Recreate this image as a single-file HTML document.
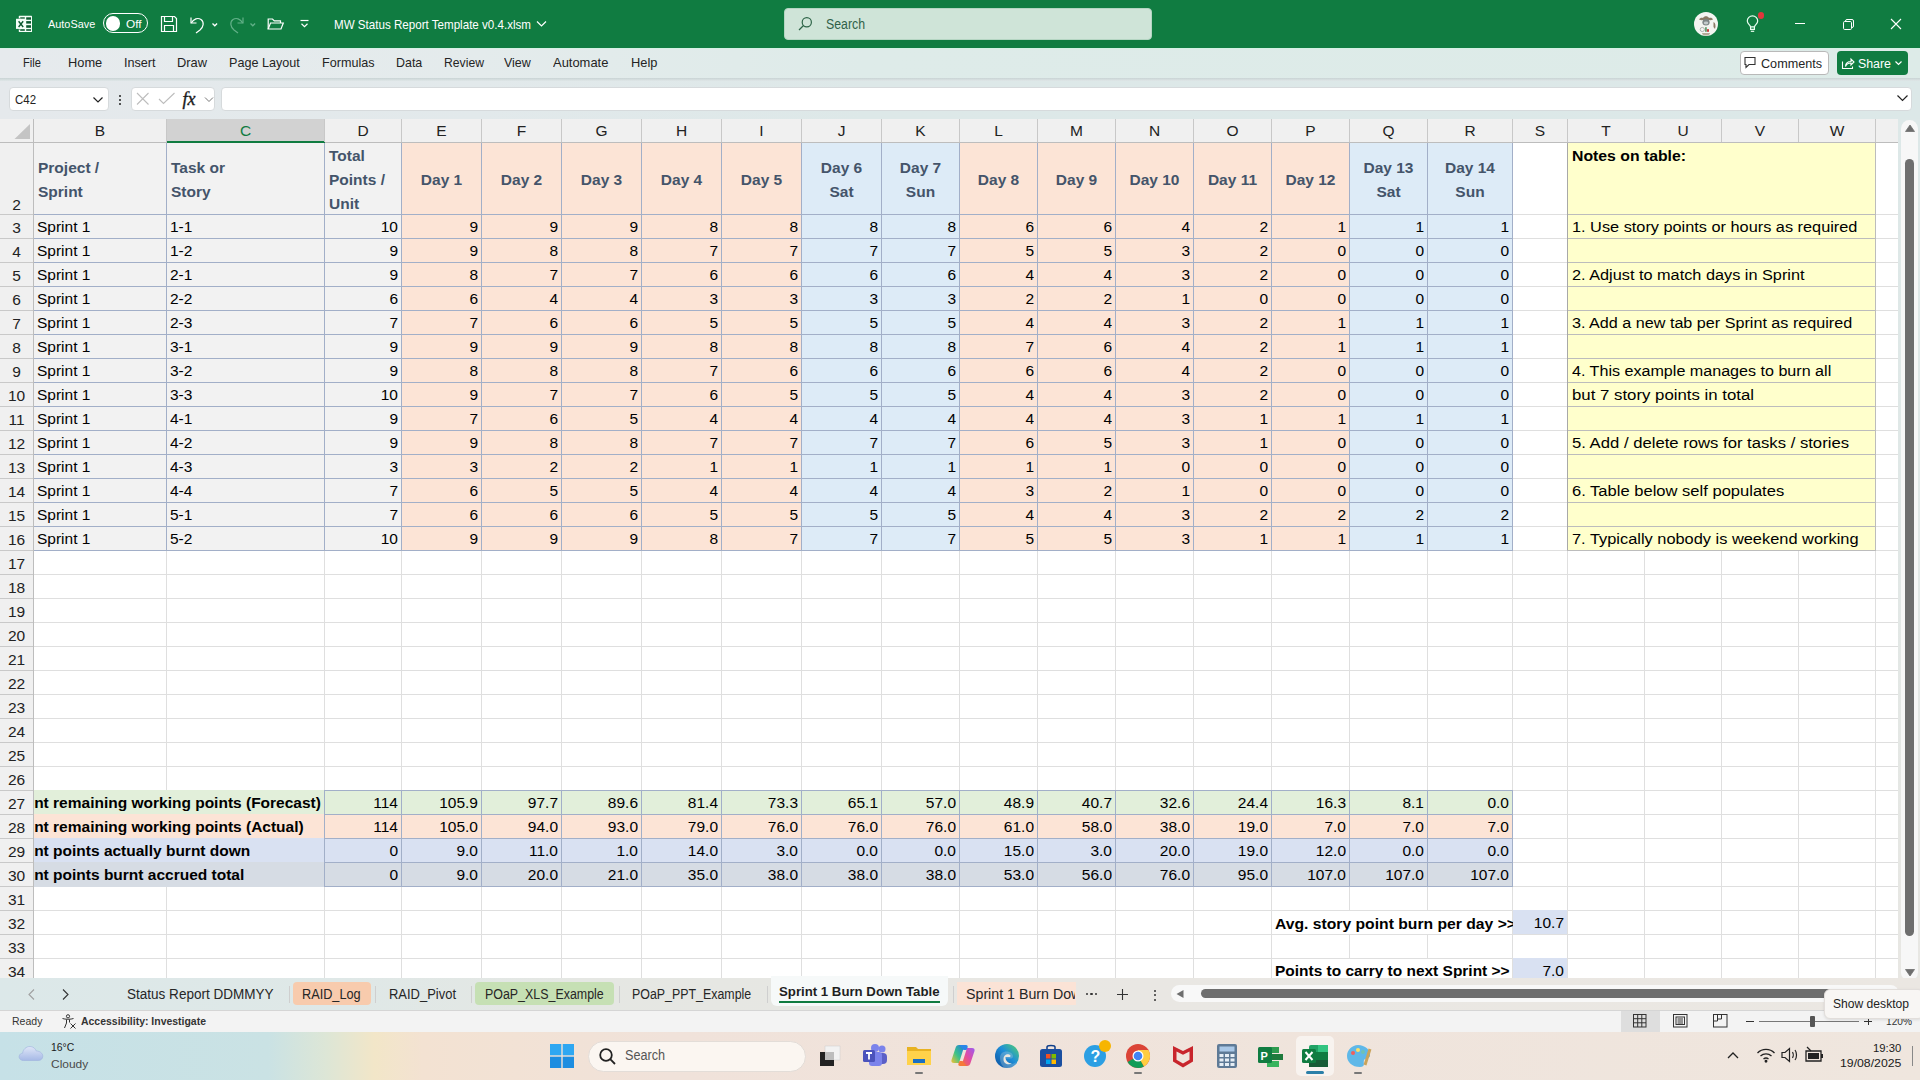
<!DOCTYPE html><html><head><meta charset="utf-8"><style>

*{box-sizing:border-box;margin:0;padding:0}
html,body{width:1920px;height:1080px;overflow:hidden;background:#fff;font-family:"Liberation Sans", sans-serif;}
.ab{position:absolute}
.t{position:absolute;white-space:nowrap;line-height:1}
.c{position:absolute;white-space:nowrap;font-size:15.5px;line-height:24px;color:#000;overflow:hidden}
.r{text-align:right}
.hd{font-weight:bold;color:#44546a;}

</style></head><body>
<div class="ab" style="left:0;top:0;width:1920px;height:48px;background:#107c41"></div>
<svg class="ab" style="left:15px;top:15px" width="18" height="18" viewBox="0 0 18 18">
<rect x="3.8" y="0.8" width="13.2" height="16.2" rx="0.6" fill="#f4fff8"/>
<g fill="#0c5a30"><rect x="11.2" y="2.3" width="4.8" height="2.4"/><rect x="11.2" y="6.1" width="4.8" height="2.5"/><rect x="11.2" y="10.2" width="4.8" height="2.6"/><rect x="11.2" y="14.2" width="4.8" height="1.6"/><rect x="5.2" y="2.3" width="4.6" height="1.5"/><rect x="5.2" y="14.2" width="4.6" height="1.6"/></g>
<rect x="3.8" y="3.2" width="1" height="0.7" fill="#0c5a30"/><rect x="3.8" y="13.9" width="1" height="0.7" fill="#0c5a30"/>
<rect x="1" y="3.8" width="9.3" height="10.1" fill="#f4fff8"/>
<path d="M3.6 6.3 L8.2 12 M8.2 6.3 L3.6 12" stroke="#0c5a30" stroke-width="1.4"/></svg>
<div class="t" style="left:48px;top:18.69px;font-size:11px;color:#fff;font-weight:400;font-family:'Liberation Sans';letter-spacing:0px;transform:scaleX(0.9895);transform-origin:0 0;">AutoSave</div>
<div class="ab" style="left:103px;top:13px;width:45px;height:20px;border:1.3px solid #fff;border-radius:10px"></div>
<div class="ab" style="left:105.5px;top:16px;width:14.5px;height:14.5px;background:#fff;border-radius:50%"></div>
<div class="t" style="left:126px;top:18.69px;font-size:11px;color:#fff;font-weight:400;font-family:'Liberation Sans';letter-spacing:0px;transform:scaleX(1.0770);transform-origin:0 0;">Off</div>
<svg class="ab" style="left:160px;top:15px" width="19" height="19" viewBox="0 0 19 19" fill="none" stroke="#fff" stroke-width="1.2">
<path d="M1.5 1.5 H14.5 L16.5 3.5 V16.5 H1.5 Z"/><path d="M4.5 1.5 V6.5 H12.5 V1.5"/><path d="M4.5 16.5 V10.5 H13.5 V16.5"/></svg>
<svg class="ab" style="left:189px;top:15px" width="32" height="19" viewBox="0 0 32 19" fill="none" stroke="#fff" stroke-width="1.2">
<path d="M2 2.5 V8 H7.5"/><path d="M2.3 8 C4.5 3.5 9 2.5 12 4.5 C15.5 7 14.5 12 11 15 L7 18"/><path d="M23.5 8.5 L25.8 10.8 L28.1 8.5" stroke-width="1.3"/></svg>
<svg class="ab" style="left:228px;top:15px" width="32" height="19" viewBox="0 0 32 19" fill="none" stroke="#62b088" stroke-width="1.2">
<path d="M15 2.5 V8 H9.5"/><path d="M14.7 8 C12.5 3.5 8 2.5 5 4.5 C1.5 7 2.5 12 6 15 L10 18"/><path d="M22.5 8.5 L24.8 10.8 L27.1 8.5" stroke-width="1.3"/></svg>
<svg class="ab" style="left:266px;top:15px" width="19" height="19" viewBox="0 0 19 19" fill="none" stroke="#fff" stroke-width="1.2">
<path d="M2.2 14 V4 H6.5 L8.3 5.8 H14.5 V8"/><path d="M2.2 14 L4.5 8 H17.3 L15 14 Z"/></svg>
<svg class="ab" style="left:297.5px;top:17px" width="13" height="13" viewBox="0 0 13 13" fill="none" stroke="#fff" stroke-width="1.2">
<line x1="2.5" y1="3.5" x2="10.5" y2="3.5"/><path d="M3.5 6.8 L6.5 9.6 L9.5 6.8"/></svg>
<div class="t" style="left:334.4px;top:18.96px;font-size:12.8px;color:#fff;font-weight:400;font-family:'Liberation Sans';letter-spacing:0px;transform:scaleX(0.9062);transform-origin:0 0;">MW Status Report Template v0.4.xlsm</div>
<svg class="ab" style="left:535px;top:19px" width="13" height="10" viewBox="0 0 13 10" fill="none" stroke="#fff" stroke-width="1.2"><path d="M2 2.5 L6.5 7 L11 2.5"/></svg>
<div class="ab" style="left:784px;top:8px;width:368px;height:32px;background:#cfe4d8;border:1px solid #b4d5c2;border-radius:4px"></div>
<svg class="ab" style="left:797px;top:16px" width="16" height="16" viewBox="0 0 16 16" fill="none" stroke="#2d6447" stroke-width="1.2"><circle cx="9.8" cy="6.2" r="4.6"/><line x1="6.5" y1="9.5" x2="2" y2="14"/></svg>
<div class="t" style="left:826px;top:17.45px;font-size:14px;color:#2f6149;font-weight:400;font-family:'Liberation Sans';letter-spacing:0px;transform:scaleX(0.8792);transform-origin:0 0;">Search</div>
<svg class="ab" style="left:1693px;top:11px" width="26" height="26" viewBox="0 0 26 26"><circle cx="13" cy="13" r="12" fill="#f3f5f1"/>
<path d="M6 8.5 C7 6.5 9 6.5 10 7 C11 4.5 15 4.5 16 7 C17 6.5 19.5 6.5 20 8.5 C18 9.5 16.5 9 16 9 H10 C9.5 9 8 9.5 6 8.5 Z" fill="#8a7a64"/>
<ellipse cx="13" cy="11.3" rx="3.6" ry="3.3" fill="#7d8586"/><ellipse cx="13" cy="12" rx="2.3" ry="1.4" fill="#c4cccd"/>
<path d="M20.5 11 C22.5 12 23 15 22 18 L20.5 16 Z" fill="#8a7a64"/><path d="M13 24.5 C10 24.5 9 23 9 22 H17 C17 23 16 24.5 13 24.5 Z" fill="#9a8a70" opacity="0.7"/>
<circle cx="9.3" cy="18.5" r="2.1" fill="none" stroke="#a0a0a0" stroke-width="0.8"/><rect x="12.3" y="16.2" width="1.3" height="4.6" fill="#2d7a3e"/><rect x="14" y="18.2" width="2" height="2.6" fill="#d03a3a"/></svg>
<svg class="ab" style="left:1745px;top:14px" width="16" height="20" viewBox="0 0 16 20" fill="none" stroke="#eafff2" stroke-width="1.2">
<path d="M5.5 12.8 C5.2 11 2.3 9.8 2.3 7 A5.2 5.2 0 0 1 12.7 7 C12.7 9.8 9.8 11 9.5 12.8 Z"/><path d="M5.6 13 V15.3 H9.4 V13"/><line x1="5.8" y1="17.3" x2="9.2" y2="17.3"/></svg>
<div class="ab" style="left:1757.6px;top:12.1px;width:6.9px;height:6.9px;background:#e0363c;border-radius:50%"></div>
<div class="ab" style="left:1795px;top:23px;width:10px;height:1px;background:#fff"></div>
<svg class="ab" style="left:1842px;top:18px" width="13" height="13" viewBox="0 0 13 13" fill="none" stroke="#fff" stroke-width="1"><rect x="1.5" y="3.5" width="8" height="8" rx="1.2"/><path d="M3.5 3.5 V3 A1.5 1.5 0 0 1 5 1.5 H10 A1.5 1.5 0 0 1 11.5 3 V8 A1.5 1.5 0 0 1 10 9.5 H9.5"/></svg>
<svg class="ab" style="left:1890px;top:18px" width="12" height="12" viewBox="0 0 12 12" fill="none" stroke="#fff" stroke-width="1.1"><path d="M1 1 L11 11 M11 1 L1 11"/></svg>
<div class="ab" style="left:0;top:48px;width:1920px;height:31px;background:linear-gradient(90deg,#e6eaed 0%,#e4ebec 25%,#deebe9 45%,#ddebe8 100%)"></div>
<div class="ab" style="left:0;top:48px;width:1920px;height:1px;background:#d2f3e2;opacity:0.7"></div>
<div class="ab" style="left:0;top:78px;width:1920px;height:3px;background:linear-gradient(#c9d3d4,#dfe7e8)"></div>
<div class="t" style="left:22.5px;top:57.93px;font-size:11.9px;color:#242424;font-weight:400;font-family:'Liberation Sans';letter-spacing:0px;transform:scaleX(0.9389);transform-origin:0 0;">File</div>
<div class="t" style="left:68.3px;top:57.93px;font-size:11.9px;color:#242424;font-weight:400;font-family:'Liberation Sans';letter-spacing:0px;transform:scaleX(1.0782);transform-origin:0 0;">Home</div>
<div class="t" style="left:124.2px;top:57.93px;font-size:11.9px;color:#242424;font-weight:400;font-family:'Liberation Sans';letter-spacing:0px;transform:scaleX(1.0622);transform-origin:0 0;">Insert</div>
<div class="t" style="left:177.2px;top:57.93px;font-size:11.9px;color:#242424;font-weight:400;font-family:'Liberation Sans';letter-spacing:0px;transform:scaleX(1.0811);transform-origin:0 0;">Draw</div>
<div class="t" style="left:229.2px;top:57.93px;font-size:11.9px;color:#242424;font-weight:400;font-family:'Liberation Sans';letter-spacing:0px;transform:scaleX(1.0602);transform-origin:0 0;">Page Layout</div>
<div class="t" style="left:322.2px;top:57.93px;font-size:11.9px;color:#242424;font-weight:400;font-family:'Liberation Sans';letter-spacing:0px;transform:scaleX(1.0593);transform-origin:0 0;">Formulas</div>
<div class="t" style="left:396.3px;top:57.93px;font-size:11.9px;color:#242424;font-weight:400;font-family:'Liberation Sans';letter-spacing:0px;transform:scaleX(1.0468);transform-origin:0 0;">Data</div>
<div class="t" style="left:444.1px;top:57.93px;font-size:11.9px;color:#242424;font-weight:400;font-family:'Liberation Sans';letter-spacing:0px;transform:scaleX(1.0256);transform-origin:0 0;">Review</div>
<div class="t" style="left:504.2px;top:57.93px;font-size:11.9px;color:#242424;font-weight:400;font-family:'Liberation Sans';letter-spacing:0px;transform:scaleX(1.0484);transform-origin:0 0;">View</div>
<div class="t" style="left:553.3px;top:57.93px;font-size:11.9px;color:#242424;font-weight:400;font-family:'Liberation Sans';letter-spacing:0px;transform:scaleX(1.0883);transform-origin:0 0;">Automate</div>
<div class="t" style="left:631.2px;top:57.93px;font-size:11.9px;color:#242424;font-weight:400;font-family:'Liberation Sans';letter-spacing:0px;transform:scaleX(1.0789);transform-origin:0 0;">Help</div>
<div class="ab" style="left:1739.5px;top:51px;width:89px;height:24px;background:#fff;border:1px solid #b9b9b9;border-radius:4px"></div>
<svg class="ab" style="left:1743px;top:56px" width="14" height="14" viewBox="0 0 14 14" fill="none" stroke="#333" stroke-width="1.1"><path d="M2 1.5 H12 V8.5 H6 L3 11.5 V8.5 H2 Z"/></svg>
<div class="t" style="left:1760.6px;top:58.14px;font-size:12px;color:#242424;font-weight:400;font-family:'Liberation Sans';letter-spacing:0px;transform:scaleX(1.0514);transform-origin:0 0;">Comments</div>
<div class="ab" style="left:1837px;top:51px;width:71px;height:24px;background:#107c41;border-radius:4px"></div>
<svg class="ab" style="left:1841px;top:56px" width="14" height="14" viewBox="0 0 14 14" fill="none" stroke="#fff" stroke-width="1.1"><path d="M1.5 5.5 V12.5 H11.5 V10.5"/><path d="M4.5 10.5 C4.5 7 7 5.5 10 5.5 V3 L13 6 L10 9 V7 C7.5 7 5.5 8 4.5 10.5 Z"/></svg>
<div class="t" style="left:1858px;top:58.14px;font-size:12px;color:#fff;font-weight:400;font-family:'Liberation Sans';letter-spacing:0px;transform:scaleX(1.0302);transform-origin:0 0;">Share</div>
<svg class="ab" style="left:1894px;top:59px" width="9" height="8" viewBox="0 0 9 8" fill="none" stroke="#fff" stroke-width="1.2"><path d="M1.5 2.5 L4.5 5.5 L7.5 2.5"/></svg>
<div class="ab" style="left:0;top:81px;width:1920px;height:38px;background:linear-gradient(90deg,#e5e9ec 0%,#e2e9eb 25%,#dde8e8 45%,#dce8e8 100%)"></div>
<div class="ab" style="left:8.5px;top:86.8px;width:100.5px;height:24.5px;background:#fff;border:1px solid #d6dadc;border-radius:4px"></div>
<div class="t" style="left:15.2px;top:92.90px;font-size:13px;color:#222;font-weight:400;font-family:'Liberation Sans';letter-spacing:0px;transform:scaleX(0.8802);transform-origin:0 0;">C42</div>
<svg class="ab" style="left:92px;top:96px" width="12" height="8" viewBox="0 0 12 8" fill="none" stroke="#222" stroke-width="1.2"><path d="M1.5 1.5 L6 6 L10.5 1.5"/></svg>
<div class="ab" style="left:118.8px;top:94.5px;width:2px;height:2px;background:#222;border-radius:50%"></div>
<div class="ab" style="left:118.8px;top:98.5px;width:2px;height:2px;background:#222;border-radius:50%"></div>
<div class="ab" style="left:118.8px;top:102.5px;width:2px;height:2px;background:#222;border-radius:50%"></div>
<div class="ab" style="left:131px;top:86.8px;width:84px;height:24.5px;background:#fff;border:1px solid #d6dadc;border-radius:4px"></div>
<svg class="ab" style="left:136px;top:92px" width="42" height="14" viewBox="0 0 42 14" fill="none" stroke="#bdbdbd" stroke-width="1.1"><path d="M1 1 L12.5 12.5 M12.5 1 L1 12.5"/><path d="M23 7 L27.5 11.5 L38.5 1"/></svg>
<div class="t" style="left:182.5px;top:89.5px;font-size:18px;font-style:italic;font-weight:normal;font-family:'Liberation Serif',serif;color:#1a1a1a;-webkit-text-stroke:0.35px #1a1a1a">fx</div>
<svg class="ab" style="left:204px;top:96px" width="10" height="7" viewBox="0 0 10 7" fill="none" stroke="#777" stroke-width="1"><path d="M1 1.5 L5 5.5 L9 1.5"/></svg>
<div class="ab" style="left:221px;top:86.8px;width:1690.5px;height:24.5px;background:#fff;border:1px solid #d6dadc;border-radius:4px"></div>
<svg class="ab" style="left:1896px;top:94px" width="13" height="9" viewBox="0 0 13 9" fill="none" stroke="#222" stroke-width="1.2"><path d="M1.5 1.5 L6.5 6.5 L11.5 1.5"/></svg>
<div class="ab" style="left:0;top:119px;width:1898px;height:859px;background:#fff;overflow:hidden">
<div class="ab" style="left:0px;top:0px;width:1900px;height:23px;background:#f0f0f0"></div>
<div class="ab" style="left:0px;top:23px;width:1900px;height:1px;background:#bdbdbd"></div>
<div class="ab" style="left:0px;top:24px;width:33px;height:835px;background:#f0f0f0"></div>
<div class="ab" style="left:33px;top:0px;width:1px;height:859px;background:#bdbdbd"></div>
<svg class="ab" style="left:10px;top:4px" width="21" height="17" viewBox="0 0 21 17"><path d="M20 1 V16 H4.5 Z" fill="#c4c4c4"/></svg>
<div class="ab" style="left:166px;top:0px;width:1px;height:23px;background:#c8c8c8"></div>
<div class="t" style="left:34px;top:4px;width:132px;text-align:center;font-size:15.5px;color:#222">B</div>
<div class="ab" style="left:167px;top:0px;width:157px;height:23px;background:#d2d2d2"></div>
<div class="ab" style="left:167px;top:22px;width:158px;height:2px;background:#107c41"></div>
<div class="ab" style="left:324px;top:0px;width:1px;height:23px;background:#c8c8c8"></div>
<div class="t" style="left:167px;top:4px;width:157px;text-align:center;font-size:15.5px;color:#107c41">C</div>
<div class="ab" style="left:401px;top:0px;width:1px;height:23px;background:#c8c8c8"></div>
<div class="t" style="left:325px;top:4px;width:76px;text-align:center;font-size:15.5px;color:#222">D</div>
<div class="ab" style="left:481px;top:0px;width:1px;height:23px;background:#c8c8c8"></div>
<div class="t" style="left:402px;top:4px;width:79px;text-align:center;font-size:15.5px;color:#222">E</div>
<div class="ab" style="left:561px;top:0px;width:1px;height:23px;background:#c8c8c8"></div>
<div class="t" style="left:482px;top:4px;width:79px;text-align:center;font-size:15.5px;color:#222">F</div>
<div class="ab" style="left:641px;top:0px;width:1px;height:23px;background:#c8c8c8"></div>
<div class="t" style="left:562px;top:4px;width:79px;text-align:center;font-size:15.5px;color:#222">G</div>
<div class="ab" style="left:721px;top:0px;width:1px;height:23px;background:#c8c8c8"></div>
<div class="t" style="left:642px;top:4px;width:79px;text-align:center;font-size:15.5px;color:#222">H</div>
<div class="ab" style="left:801px;top:0px;width:1px;height:23px;background:#c8c8c8"></div>
<div class="t" style="left:722px;top:4px;width:79px;text-align:center;font-size:15.5px;color:#222">I</div>
<div class="ab" style="left:881px;top:0px;width:1px;height:23px;background:#c8c8c8"></div>
<div class="t" style="left:802px;top:4px;width:79px;text-align:center;font-size:15.5px;color:#222">J</div>
<div class="ab" style="left:959px;top:0px;width:1px;height:23px;background:#c8c8c8"></div>
<div class="t" style="left:882px;top:4px;width:77px;text-align:center;font-size:15.5px;color:#222">K</div>
<div class="ab" style="left:1037px;top:0px;width:1px;height:23px;background:#c8c8c8"></div>
<div class="t" style="left:960px;top:4px;width:77px;text-align:center;font-size:15.5px;color:#222">L</div>
<div class="ab" style="left:1115px;top:0px;width:1px;height:23px;background:#c8c8c8"></div>
<div class="t" style="left:1038px;top:4px;width:77px;text-align:center;font-size:15.5px;color:#222">M</div>
<div class="ab" style="left:1193px;top:0px;width:1px;height:23px;background:#c8c8c8"></div>
<div class="t" style="left:1116px;top:4px;width:77px;text-align:center;font-size:15.5px;color:#222">N</div>
<div class="ab" style="left:1271px;top:0px;width:1px;height:23px;background:#c8c8c8"></div>
<div class="t" style="left:1194px;top:4px;width:77px;text-align:center;font-size:15.5px;color:#222">O</div>
<div class="ab" style="left:1349px;top:0px;width:1px;height:23px;background:#c8c8c8"></div>
<div class="t" style="left:1272px;top:4px;width:77px;text-align:center;font-size:15.5px;color:#222">P</div>
<div class="ab" style="left:1427px;top:0px;width:1px;height:23px;background:#c8c8c8"></div>
<div class="t" style="left:1350px;top:4px;width:77px;text-align:center;font-size:15.5px;color:#222">Q</div>
<div class="ab" style="left:1512px;top:0px;width:1px;height:23px;background:#c8c8c8"></div>
<div class="t" style="left:1428px;top:4px;width:84px;text-align:center;font-size:15.5px;color:#222">R</div>
<div class="ab" style="left:1567px;top:0px;width:1px;height:23px;background:#c8c8c8"></div>
<div class="t" style="left:1513px;top:4px;width:54px;text-align:center;font-size:15.5px;color:#222">S</div>
<div class="ab" style="left:1644px;top:0px;width:1px;height:23px;background:#c8c8c8"></div>
<div class="t" style="left:1568px;top:4px;width:76px;text-align:center;font-size:15.5px;color:#222">T</div>
<div class="ab" style="left:1721px;top:0px;width:1px;height:23px;background:#c8c8c8"></div>
<div class="t" style="left:1645px;top:4px;width:76px;text-align:center;font-size:15.5px;color:#222">U</div>
<div class="ab" style="left:1798px;top:0px;width:1px;height:23px;background:#c8c8c8"></div>
<div class="t" style="left:1722px;top:4px;width:76px;text-align:center;font-size:15.5px;color:#222">V</div>
<div class="ab" style="left:1875px;top:0px;width:1px;height:23px;background:#c8c8c8"></div>
<div class="t" style="left:1799px;top:4px;width:76px;text-align:center;font-size:15.5px;color:#222">W</div>
<div class="ab" style="left:1899px;top:0px;width:1px;height:23px;background:#c8c8c8"></div>
<div class="ab" style="left:34px;top:24px;width:132px;height:407px;background:#f2f2f2"></div>
<div class="ab" style="left:167px;top:24px;width:157px;height:407px;background:#f2f2f2"></div>
<div class="ab" style="left:325px;top:24px;width:76px;height:407px;background:#f2f2f2"></div>
<div class="ab" style="left:402px;top:24px;width:79px;height:407px;background:#fce4d6"></div>
<div class="ab" style="left:482px;top:24px;width:79px;height:407px;background:#fce4d6"></div>
<div class="ab" style="left:562px;top:24px;width:79px;height:407px;background:#fce4d6"></div>
<div class="ab" style="left:642px;top:24px;width:79px;height:407px;background:#fce4d6"></div>
<div class="ab" style="left:722px;top:24px;width:79px;height:407px;background:#fce4d6"></div>
<div class="ab" style="left:960px;top:24px;width:77px;height:407px;background:#fce4d6"></div>
<div class="ab" style="left:1038px;top:24px;width:77px;height:407px;background:#fce4d6"></div>
<div class="ab" style="left:1116px;top:24px;width:77px;height:407px;background:#fce4d6"></div>
<div class="ab" style="left:1194px;top:24px;width:77px;height:407px;background:#fce4d6"></div>
<div class="ab" style="left:1272px;top:24px;width:77px;height:407px;background:#fce4d6"></div>
<div class="ab" style="left:802px;top:24px;width:79px;height:407px;background:#ddebf7"></div>
<div class="ab" style="left:882px;top:24px;width:77px;height:407px;background:#ddebf7"></div>
<div class="ab" style="left:1350px;top:24px;width:77px;height:407px;background:#ddebf7"></div>
<div class="ab" style="left:1428px;top:24px;width:84px;height:407px;background:#ddebf7"></div>
<div class="ab" style="left:1568px;top:24px;width:307px;height:407px;background:#ffffcc"></div>
<div class="ab" style="left:166px;top:24px;width:1px;height:835px;background:#dfdfdf"></div>
<div class="ab" style="left:324px;top:24px;width:1px;height:835px;background:#dfdfdf"></div>
<div class="ab" style="left:401px;top:24px;width:1px;height:835px;background:#dfdfdf"></div>
<div class="ab" style="left:481px;top:24px;width:1px;height:835px;background:#dfdfdf"></div>
<div class="ab" style="left:561px;top:24px;width:1px;height:835px;background:#dfdfdf"></div>
<div class="ab" style="left:641px;top:24px;width:1px;height:835px;background:#dfdfdf"></div>
<div class="ab" style="left:721px;top:24px;width:1px;height:835px;background:#dfdfdf"></div>
<div class="ab" style="left:801px;top:24px;width:1px;height:835px;background:#dfdfdf"></div>
<div class="ab" style="left:881px;top:24px;width:1px;height:835px;background:#dfdfdf"></div>
<div class="ab" style="left:959px;top:24px;width:1px;height:835px;background:#dfdfdf"></div>
<div class="ab" style="left:1037px;top:24px;width:1px;height:835px;background:#dfdfdf"></div>
<div class="ab" style="left:1115px;top:24px;width:1px;height:835px;background:#dfdfdf"></div>
<div class="ab" style="left:1193px;top:24px;width:1px;height:835px;background:#dfdfdf"></div>
<div class="ab" style="left:1271px;top:24px;width:1px;height:835px;background:#dfdfdf"></div>
<div class="ab" style="left:1349px;top:24px;width:1px;height:835px;background:#dfdfdf"></div>
<div class="ab" style="left:1427px;top:24px;width:1px;height:835px;background:#dfdfdf"></div>
<div class="ab" style="left:1512px;top:24px;width:1px;height:835px;background:#dfdfdf"></div>
<div class="ab" style="left:1567px;top:24px;width:1px;height:835px;background:#dfdfdf"></div>
<div class="ab" style="left:1644px;top:24px;width:1px;height:835px;background:#dfdfdf"></div>
<div class="ab" style="left:1721px;top:24px;width:1px;height:835px;background:#dfdfdf"></div>
<div class="ab" style="left:1798px;top:24px;width:1px;height:835px;background:#dfdfdf"></div>
<div class="ab" style="left:1875px;top:24px;width:1px;height:835px;background:#dfdfdf"></div>
<div class="ab" style="left:1899px;top:24px;width:1px;height:835px;background:#dfdfdf"></div>
<div class="ab" style="left:34px;top:95px;width:1866px;height:1px;background:#dfdfdf"></div>
<div class="ab" style="left:34px;top:119px;width:1866px;height:1px;background:#dfdfdf"></div>
<div class="ab" style="left:34px;top:143px;width:1866px;height:1px;background:#dfdfdf"></div>
<div class="ab" style="left:34px;top:167px;width:1866px;height:1px;background:#dfdfdf"></div>
<div class="ab" style="left:34px;top:191px;width:1866px;height:1px;background:#dfdfdf"></div>
<div class="ab" style="left:34px;top:215px;width:1866px;height:1px;background:#dfdfdf"></div>
<div class="ab" style="left:34px;top:239px;width:1866px;height:1px;background:#dfdfdf"></div>
<div class="ab" style="left:34px;top:263px;width:1866px;height:1px;background:#dfdfdf"></div>
<div class="ab" style="left:34px;top:287px;width:1866px;height:1px;background:#dfdfdf"></div>
<div class="ab" style="left:34px;top:311px;width:1866px;height:1px;background:#dfdfdf"></div>
<div class="ab" style="left:34px;top:335px;width:1866px;height:1px;background:#dfdfdf"></div>
<div class="ab" style="left:34px;top:359px;width:1866px;height:1px;background:#dfdfdf"></div>
<div class="ab" style="left:34px;top:383px;width:1866px;height:1px;background:#dfdfdf"></div>
<div class="ab" style="left:34px;top:407px;width:1866px;height:1px;background:#dfdfdf"></div>
<div class="ab" style="left:34px;top:431px;width:1866px;height:1px;background:#dfdfdf"></div>
<div class="ab" style="left:34px;top:455px;width:1866px;height:1px;background:#dfdfdf"></div>
<div class="ab" style="left:34px;top:479px;width:1866px;height:1px;background:#dfdfdf"></div>
<div class="ab" style="left:34px;top:503px;width:1866px;height:1px;background:#dfdfdf"></div>
<div class="ab" style="left:34px;top:527px;width:1866px;height:1px;background:#dfdfdf"></div>
<div class="ab" style="left:34px;top:551px;width:1866px;height:1px;background:#dfdfdf"></div>
<div class="ab" style="left:34px;top:575px;width:1866px;height:1px;background:#dfdfdf"></div>
<div class="ab" style="left:34px;top:599px;width:1866px;height:1px;background:#dfdfdf"></div>
<div class="ab" style="left:34px;top:623px;width:1866px;height:1px;background:#dfdfdf"></div>
<div class="ab" style="left:34px;top:647px;width:1866px;height:1px;background:#dfdfdf"></div>
<div class="ab" style="left:34px;top:671px;width:1866px;height:1px;background:#dfdfdf"></div>
<div class="ab" style="left:34px;top:695px;width:1866px;height:1px;background:#dfdfdf"></div>
<div class="ab" style="left:34px;top:719px;width:1866px;height:1px;background:#dfdfdf"></div>
<div class="ab" style="left:34px;top:743px;width:1866px;height:1px;background:#dfdfdf"></div>
<div class="ab" style="left:34px;top:767px;width:1866px;height:1px;background:#dfdfdf"></div>
<div class="ab" style="left:34px;top:791px;width:1866px;height:1px;background:#dfdfdf"></div>
<div class="ab" style="left:34px;top:815px;width:1866px;height:1px;background:#dfdfdf"></div>
<div class="ab" style="left:34px;top:839px;width:1866px;height:1px;background:#dfdfdf"></div>
<div class="ab" style="left:34px;top:863px;width:1866px;height:1px;background:#dfdfdf"></div>
<div class="ab" style="left:34px;top:24px;width:132px;height:407px;background:#f2f2f2"></div>
<div class="ab" style="left:167px;top:24px;width:157px;height:407px;background:#f2f2f2"></div>
<div class="ab" style="left:325px;top:24px;width:76px;height:407px;background:#f2f2f2"></div>
<div class="ab" style="left:402px;top:24px;width:79px;height:407px;background:#fce4d6"></div>
<div class="ab" style="left:482px;top:24px;width:79px;height:407px;background:#fce4d6"></div>
<div class="ab" style="left:562px;top:24px;width:79px;height:407px;background:#fce4d6"></div>
<div class="ab" style="left:642px;top:24px;width:79px;height:407px;background:#fce4d6"></div>
<div class="ab" style="left:722px;top:24px;width:79px;height:407px;background:#fce4d6"></div>
<div class="ab" style="left:960px;top:24px;width:77px;height:407px;background:#fce4d6"></div>
<div class="ab" style="left:1038px;top:24px;width:77px;height:407px;background:#fce4d6"></div>
<div class="ab" style="left:1116px;top:24px;width:77px;height:407px;background:#fce4d6"></div>
<div class="ab" style="left:1194px;top:24px;width:77px;height:407px;background:#fce4d6"></div>
<div class="ab" style="left:1272px;top:24px;width:77px;height:407px;background:#fce4d6"></div>
<div class="ab" style="left:802px;top:24px;width:79px;height:407px;background:#ddebf7"></div>
<div class="ab" style="left:882px;top:24px;width:77px;height:407px;background:#ddebf7"></div>
<div class="ab" style="left:1350px;top:24px;width:77px;height:407px;background:#ddebf7"></div>
<div class="ab" style="left:1428px;top:24px;width:84px;height:407px;background:#ddebf7"></div>
<div class="ab" style="left:1568px;top:24px;width:307px;height:407px;background:#ffffcc"></div>
<div class="ab" style="left:1567px;top:95px;width:309px;height:1px;background:#bcbcbc"></div>
<div class="ab" style="left:1567px;top:119px;width:309px;height:1px;background:#bcbcbc"></div>
<div class="ab" style="left:1567px;top:143px;width:309px;height:1px;background:#bcbcbc"></div>
<div class="ab" style="left:1567px;top:167px;width:309px;height:1px;background:#bcbcbc"></div>
<div class="ab" style="left:1567px;top:191px;width:309px;height:1px;background:#bcbcbc"></div>
<div class="ab" style="left:1567px;top:215px;width:309px;height:1px;background:#bcbcbc"></div>
<div class="ab" style="left:1567px;top:239px;width:309px;height:1px;background:#bcbcbc"></div>
<div class="ab" style="left:1567px;top:263px;width:309px;height:1px;background:#bcbcbc"></div>
<div class="ab" style="left:1567px;top:287px;width:309px;height:1px;background:#bcbcbc"></div>
<div class="ab" style="left:1567px;top:311px;width:309px;height:1px;background:#bcbcbc"></div>
<div class="ab" style="left:1567px;top:335px;width:309px;height:1px;background:#bcbcbc"></div>
<div class="ab" style="left:1567px;top:359px;width:309px;height:1px;background:#bcbcbc"></div>
<div class="ab" style="left:1567px;top:383px;width:309px;height:1px;background:#bcbcbc"></div>
<div class="ab" style="left:1567px;top:407px;width:309px;height:1px;background:#bcbcbc"></div>
<div class="ab" style="left:1567px;top:431px;width:309px;height:1px;background:#bcbcbc"></div>
<div class="ab" style="left:1567px;top:24px;width:1px;height:407px;background:#a8a8a8"></div>
<div class="ab" style="left:1875px;top:24px;width:1px;height:407px;background:#bcbcbc"></div>
<div class="ab" style="left:166px;top:24px;width:1px;height:407px;background:#a2afc8"></div>
<div class="ab" style="left:324px;top:24px;width:1px;height:407px;background:#a2afc8"></div>
<div class="ab" style="left:401px;top:24px;width:1px;height:407px;background:#a2afc8"></div>
<div class="ab" style="left:481px;top:24px;width:1px;height:407px;background:#a2afc8"></div>
<div class="ab" style="left:561px;top:24px;width:1px;height:407px;background:#a2afc8"></div>
<div class="ab" style="left:641px;top:24px;width:1px;height:407px;background:#a2afc8"></div>
<div class="ab" style="left:721px;top:24px;width:1px;height:407px;background:#a2afc8"></div>
<div class="ab" style="left:801px;top:24px;width:1px;height:407px;background:#a2afc8"></div>
<div class="ab" style="left:881px;top:24px;width:1px;height:407px;background:#a2afc8"></div>
<div class="ab" style="left:959px;top:24px;width:1px;height:407px;background:#a2afc8"></div>
<div class="ab" style="left:1037px;top:24px;width:1px;height:407px;background:#a2afc8"></div>
<div class="ab" style="left:1115px;top:24px;width:1px;height:407px;background:#a2afc8"></div>
<div class="ab" style="left:1193px;top:24px;width:1px;height:407px;background:#a2afc8"></div>
<div class="ab" style="left:1271px;top:24px;width:1px;height:407px;background:#a2afc8"></div>
<div class="ab" style="left:1349px;top:24px;width:1px;height:407px;background:#a2afc8"></div>
<div class="ab" style="left:1427px;top:24px;width:1px;height:407px;background:#a2afc8"></div>
<div class="ab" style="left:1512px;top:24px;width:1px;height:407px;background:#a2afc8"></div>
<div class="ab" style="left:34px;top:95px;width:1479px;height:1px;background:#a2afc8"></div>
<div class="ab" style="left:34px;top:119px;width:1479px;height:1px;background:#a2afc8"></div>
<div class="ab" style="left:34px;top:143px;width:1479px;height:1px;background:#a2afc8"></div>
<div class="ab" style="left:34px;top:167px;width:1479px;height:1px;background:#a2afc8"></div>
<div class="ab" style="left:34px;top:191px;width:1479px;height:1px;background:#a2afc8"></div>
<div class="ab" style="left:34px;top:215px;width:1479px;height:1px;background:#a2afc8"></div>
<div class="ab" style="left:34px;top:239px;width:1479px;height:1px;background:#a2afc8"></div>
<div class="ab" style="left:34px;top:263px;width:1479px;height:1px;background:#a2afc8"></div>
<div class="ab" style="left:34px;top:287px;width:1479px;height:1px;background:#a2afc8"></div>
<div class="ab" style="left:34px;top:311px;width:1479px;height:1px;background:#a2afc8"></div>
<div class="ab" style="left:34px;top:335px;width:1479px;height:1px;background:#a2afc8"></div>
<div class="ab" style="left:34px;top:359px;width:1479px;height:1px;background:#a2afc8"></div>
<div class="ab" style="left:34px;top:383px;width:1479px;height:1px;background:#a2afc8"></div>
<div class="ab" style="left:34px;top:407px;width:1479px;height:1px;background:#a2afc8"></div>
<div class="ab" style="left:34px;top:431px;width:1479px;height:1px;background:#a2afc8"></div>
<div class="t" style="left:0px;top:77.69999999999999px;width:33px;text-align:center;font-size:15.5px;color:#222">2</div>
<div class="ab" style="left:0px;top:95px;width:33px;height:1px;background:#c9c9c9"></div>
<div class="t" style="left:0px;top:100.69999999999999px;width:33px;text-align:center;font-size:15.5px;color:#222">3</div>
<div class="ab" style="left:0px;top:119px;width:33px;height:1px;background:#c9c9c9"></div>
<div class="t" style="left:0px;top:124.69999999999999px;width:33px;text-align:center;font-size:15.5px;color:#222">4</div>
<div class="ab" style="left:0px;top:143px;width:33px;height:1px;background:#c9c9c9"></div>
<div class="t" style="left:0px;top:148.7px;width:33px;text-align:center;font-size:15.5px;color:#222">5</div>
<div class="ab" style="left:0px;top:167px;width:33px;height:1px;background:#c9c9c9"></div>
<div class="t" style="left:0px;top:172.7px;width:33px;text-align:center;font-size:15.5px;color:#222">6</div>
<div class="ab" style="left:0px;top:191px;width:33px;height:1px;background:#c9c9c9"></div>
<div class="t" style="left:0px;top:196.7px;width:33px;text-align:center;font-size:15.5px;color:#222">7</div>
<div class="ab" style="left:0px;top:215px;width:33px;height:1px;background:#c9c9c9"></div>
<div class="t" style="left:0px;top:220.7px;width:33px;text-align:center;font-size:15.5px;color:#222">8</div>
<div class="ab" style="left:0px;top:239px;width:33px;height:1px;background:#c9c9c9"></div>
<div class="t" style="left:0px;top:244.7px;width:33px;text-align:center;font-size:15.5px;color:#222">9</div>
<div class="ab" style="left:0px;top:263px;width:33px;height:1px;background:#c9c9c9"></div>
<div class="t" style="left:0px;top:268.7px;width:33px;text-align:center;font-size:15.5px;color:#222">10</div>
<div class="ab" style="left:0px;top:287px;width:33px;height:1px;background:#c9c9c9"></div>
<div class="t" style="left:0px;top:292.7px;width:33px;text-align:center;font-size:15.5px;color:#222">11</div>
<div class="ab" style="left:0px;top:311px;width:33px;height:1px;background:#c9c9c9"></div>
<div class="t" style="left:0px;top:316.7px;width:33px;text-align:center;font-size:15.5px;color:#222">12</div>
<div class="ab" style="left:0px;top:335px;width:33px;height:1px;background:#c9c9c9"></div>
<div class="t" style="left:0px;top:340.7px;width:33px;text-align:center;font-size:15.5px;color:#222">13</div>
<div class="ab" style="left:0px;top:359px;width:33px;height:1px;background:#c9c9c9"></div>
<div class="t" style="left:0px;top:364.7px;width:33px;text-align:center;font-size:15.5px;color:#222">14</div>
<div class="ab" style="left:0px;top:383px;width:33px;height:1px;background:#c9c9c9"></div>
<div class="t" style="left:0px;top:388.7px;width:33px;text-align:center;font-size:15.5px;color:#222">15</div>
<div class="ab" style="left:0px;top:407px;width:33px;height:1px;background:#c9c9c9"></div>
<div class="t" style="left:0px;top:412.70000000000005px;width:33px;text-align:center;font-size:15.5px;color:#222">16</div>
<div class="ab" style="left:0px;top:431px;width:33px;height:1px;background:#c9c9c9"></div>
<div class="t" style="left:0px;top:436.70000000000005px;width:33px;text-align:center;font-size:15.5px;color:#222">17</div>
<div class="ab" style="left:0px;top:455px;width:33px;height:1px;background:#c9c9c9"></div>
<div class="t" style="left:0px;top:460.70000000000005px;width:33px;text-align:center;font-size:15.5px;color:#222">18</div>
<div class="ab" style="left:0px;top:479px;width:33px;height:1px;background:#c9c9c9"></div>
<div class="t" style="left:0px;top:484.70000000000005px;width:33px;text-align:center;font-size:15.5px;color:#222">19</div>
<div class="ab" style="left:0px;top:503px;width:33px;height:1px;background:#c9c9c9"></div>
<div class="t" style="left:0px;top:508.70000000000005px;width:33px;text-align:center;font-size:15.5px;color:#222">20</div>
<div class="ab" style="left:0px;top:527px;width:33px;height:1px;background:#c9c9c9"></div>
<div class="t" style="left:0px;top:532.7px;width:33px;text-align:center;font-size:15.5px;color:#222">21</div>
<div class="ab" style="left:0px;top:551px;width:33px;height:1px;background:#c9c9c9"></div>
<div class="t" style="left:0px;top:556.7px;width:33px;text-align:center;font-size:15.5px;color:#222">22</div>
<div class="ab" style="left:0px;top:575px;width:33px;height:1px;background:#c9c9c9"></div>
<div class="t" style="left:0px;top:580.7px;width:33px;text-align:center;font-size:15.5px;color:#222">23</div>
<div class="ab" style="left:0px;top:599px;width:33px;height:1px;background:#c9c9c9"></div>
<div class="t" style="left:0px;top:604.7px;width:33px;text-align:center;font-size:15.5px;color:#222">24</div>
<div class="ab" style="left:0px;top:623px;width:33px;height:1px;background:#c9c9c9"></div>
<div class="t" style="left:0px;top:628.7px;width:33px;text-align:center;font-size:15.5px;color:#222">25</div>
<div class="ab" style="left:0px;top:647px;width:33px;height:1px;background:#c9c9c9"></div>
<div class="t" style="left:0px;top:652.7px;width:33px;text-align:center;font-size:15.5px;color:#222">26</div>
<div class="ab" style="left:0px;top:671px;width:33px;height:1px;background:#c9c9c9"></div>
<div class="t" style="left:0px;top:676.7px;width:33px;text-align:center;font-size:15.5px;color:#222">27</div>
<div class="ab" style="left:0px;top:695px;width:33px;height:1px;background:#c9c9c9"></div>
<div class="t" style="left:0px;top:700.7px;width:33px;text-align:center;font-size:15.5px;color:#222">28</div>
<div class="ab" style="left:0px;top:719px;width:33px;height:1px;background:#c9c9c9"></div>
<div class="t" style="left:0px;top:724.7px;width:33px;text-align:center;font-size:15.5px;color:#222">29</div>
<div class="ab" style="left:0px;top:743px;width:33px;height:1px;background:#c9c9c9"></div>
<div class="t" style="left:0px;top:748.7px;width:33px;text-align:center;font-size:15.5px;color:#222">30</div>
<div class="ab" style="left:0px;top:767px;width:33px;height:1px;background:#c9c9c9"></div>
<div class="t" style="left:0px;top:772.7px;width:33px;text-align:center;font-size:15.5px;color:#222">31</div>
<div class="ab" style="left:0px;top:791px;width:33px;height:1px;background:#c9c9c9"></div>
<div class="t" style="left:0px;top:796.7px;width:33px;text-align:center;font-size:15.5px;color:#222">32</div>
<div class="ab" style="left:0px;top:815px;width:33px;height:1px;background:#c9c9c9"></div>
<div class="t" style="left:0px;top:820.7px;width:33px;text-align:center;font-size:15.5px;color:#222">33</div>
<div class="ab" style="left:0px;top:839px;width:33px;height:1px;background:#c9c9c9"></div>
<div class="t" style="left:0px;top:844.7px;width:33px;text-align:center;font-size:15.5px;color:#222">34</div>
<div class="ab" style="left:0px;top:863px;width:33px;height:1px;background:#c9c9c9"></div>
<div class="t hd" style="left:38px;top:41px;font-size:15.5px">Project /</div>
<div class="t hd" style="left:38px;top:65px;font-size:15.5px">Sprint</div>
<div class="t hd" style="left:171px;top:41px;font-size:15.5px">Task or</div>
<div class="t hd" style="left:171px;top:65px;font-size:15.5px">Story</div>
<div class="t hd" style="left:329px;top:29px;font-size:15.5px">Total</div>
<div class="t hd" style="left:329px;top:53px;font-size:15.5px">Points /</div>
<div class="t hd" style="left:329px;top:77px;font-size:15.5px">Unit</div>
<div class="t hd" style="left:402px;top:53px;width:79px;text-align:center;font-size:15.5px">Day 1</div>
<div class="t hd" style="left:482px;top:53px;width:79px;text-align:center;font-size:15.5px">Day 2</div>
<div class="t hd" style="left:562px;top:53px;width:79px;text-align:center;font-size:15.5px">Day 3</div>
<div class="t hd" style="left:642px;top:53px;width:79px;text-align:center;font-size:15.5px">Day 4</div>
<div class="t hd" style="left:722px;top:53px;width:79px;text-align:center;font-size:15.5px">Day 5</div>
<div class="t hd" style="left:960px;top:53px;width:77px;text-align:center;font-size:15.5px">Day 8</div>
<div class="t hd" style="left:1038px;top:53px;width:77px;text-align:center;font-size:15.5px">Day 9</div>
<div class="t hd" style="left:1116px;top:53px;width:77px;text-align:center;font-size:15.5px">Day 10</div>
<div class="t hd" style="left:1194px;top:53px;width:77px;text-align:center;font-size:15.5px">Day 11</div>
<div class="t hd" style="left:1272px;top:53px;width:77px;text-align:center;font-size:15.5px">Day 12</div>
<div class="t hd" style="left:802px;top:41px;width:79px;text-align:center;font-size:15.5px">Day 6</div>
<div class="t hd" style="left:802px;top:65px;width:79px;text-align:center;font-size:15.5px">Sat</div>
<div class="t hd" style="left:882px;top:41px;width:77px;text-align:center;font-size:15.5px">Day 7</div>
<div class="t hd" style="left:882px;top:65px;width:77px;text-align:center;font-size:15.5px">Sun</div>
<div class="t hd" style="left:1350px;top:41px;width:77px;text-align:center;font-size:15.5px">Day 13</div>
<div class="t hd" style="left:1350px;top:65px;width:77px;text-align:center;font-size:15.5px">Sat</div>
<div class="t hd" style="left:1428px;top:41px;width:84px;text-align:center;font-size:15.5px">Day 14</div>
<div class="t hd" style="left:1428px;top:65px;width:84px;text-align:center;font-size:15.5px">Sun</div>
<div class="t" style="left:1571.5px;top:28.58px;font-size:15.5px;color:#000;font-weight:700;font-family:'Liberation Sans';letter-spacing:0px;transform:scaleX(1.0183);transform-origin:0 0;">Notes on table:</div>
<div class="c" style="left:37px;top:96px;width:125px">Sprint 1</div>
<div class="c" style="left:170px;top:96px;width:150px">1-1</div>
<div class="c r" style="left:325px;top:96px;width:73px">10</div>
<div class="c r" style="left:402px;top:96px;width:76px">9</div>
<div class="c r" style="left:482px;top:96px;width:76px">9</div>
<div class="c r" style="left:562px;top:96px;width:76px">9</div>
<div class="c r" style="left:642px;top:96px;width:76px">8</div>
<div class="c r" style="left:722px;top:96px;width:76px">8</div>
<div class="c r" style="left:802px;top:96px;width:76px">8</div>
<div class="c r" style="left:882px;top:96px;width:74px">8</div>
<div class="c r" style="left:960px;top:96px;width:74px">6</div>
<div class="c r" style="left:1038px;top:96px;width:74px">6</div>
<div class="c r" style="left:1116px;top:96px;width:74px">4</div>
<div class="c r" style="left:1194px;top:96px;width:74px">2</div>
<div class="c r" style="left:1272px;top:96px;width:74px">1</div>
<div class="c r" style="left:1350px;top:96px;width:74px">1</div>
<div class="c r" style="left:1428px;top:96px;width:81px">1</div>
<div class="c" style="left:37px;top:120px;width:125px">Sprint 1</div>
<div class="c" style="left:170px;top:120px;width:150px">1-2</div>
<div class="c r" style="left:325px;top:120px;width:73px">9</div>
<div class="c r" style="left:402px;top:120px;width:76px">9</div>
<div class="c r" style="left:482px;top:120px;width:76px">8</div>
<div class="c r" style="left:562px;top:120px;width:76px">8</div>
<div class="c r" style="left:642px;top:120px;width:76px">7</div>
<div class="c r" style="left:722px;top:120px;width:76px">7</div>
<div class="c r" style="left:802px;top:120px;width:76px">7</div>
<div class="c r" style="left:882px;top:120px;width:74px">7</div>
<div class="c r" style="left:960px;top:120px;width:74px">5</div>
<div class="c r" style="left:1038px;top:120px;width:74px">5</div>
<div class="c r" style="left:1116px;top:120px;width:74px">3</div>
<div class="c r" style="left:1194px;top:120px;width:74px">2</div>
<div class="c r" style="left:1272px;top:120px;width:74px">0</div>
<div class="c r" style="left:1350px;top:120px;width:74px">0</div>
<div class="c r" style="left:1428px;top:120px;width:81px">0</div>
<div class="c" style="left:37px;top:144px;width:125px">Sprint 1</div>
<div class="c" style="left:170px;top:144px;width:150px">2-1</div>
<div class="c r" style="left:325px;top:144px;width:73px">9</div>
<div class="c r" style="left:402px;top:144px;width:76px">8</div>
<div class="c r" style="left:482px;top:144px;width:76px">7</div>
<div class="c r" style="left:562px;top:144px;width:76px">7</div>
<div class="c r" style="left:642px;top:144px;width:76px">6</div>
<div class="c r" style="left:722px;top:144px;width:76px">6</div>
<div class="c r" style="left:802px;top:144px;width:76px">6</div>
<div class="c r" style="left:882px;top:144px;width:74px">6</div>
<div class="c r" style="left:960px;top:144px;width:74px">4</div>
<div class="c r" style="left:1038px;top:144px;width:74px">4</div>
<div class="c r" style="left:1116px;top:144px;width:74px">3</div>
<div class="c r" style="left:1194px;top:144px;width:74px">2</div>
<div class="c r" style="left:1272px;top:144px;width:74px">0</div>
<div class="c r" style="left:1350px;top:144px;width:74px">0</div>
<div class="c r" style="left:1428px;top:144px;width:81px">0</div>
<div class="c" style="left:37px;top:168px;width:125px">Sprint 1</div>
<div class="c" style="left:170px;top:168px;width:150px">2-2</div>
<div class="c r" style="left:325px;top:168px;width:73px">6</div>
<div class="c r" style="left:402px;top:168px;width:76px">6</div>
<div class="c r" style="left:482px;top:168px;width:76px">4</div>
<div class="c r" style="left:562px;top:168px;width:76px">4</div>
<div class="c r" style="left:642px;top:168px;width:76px">3</div>
<div class="c r" style="left:722px;top:168px;width:76px">3</div>
<div class="c r" style="left:802px;top:168px;width:76px">3</div>
<div class="c r" style="left:882px;top:168px;width:74px">3</div>
<div class="c r" style="left:960px;top:168px;width:74px">2</div>
<div class="c r" style="left:1038px;top:168px;width:74px">2</div>
<div class="c r" style="left:1116px;top:168px;width:74px">1</div>
<div class="c r" style="left:1194px;top:168px;width:74px">0</div>
<div class="c r" style="left:1272px;top:168px;width:74px">0</div>
<div class="c r" style="left:1350px;top:168px;width:74px">0</div>
<div class="c r" style="left:1428px;top:168px;width:81px">0</div>
<div class="c" style="left:37px;top:192px;width:125px">Sprint 1</div>
<div class="c" style="left:170px;top:192px;width:150px">2-3</div>
<div class="c r" style="left:325px;top:192px;width:73px">7</div>
<div class="c r" style="left:402px;top:192px;width:76px">7</div>
<div class="c r" style="left:482px;top:192px;width:76px">6</div>
<div class="c r" style="left:562px;top:192px;width:76px">6</div>
<div class="c r" style="left:642px;top:192px;width:76px">5</div>
<div class="c r" style="left:722px;top:192px;width:76px">5</div>
<div class="c r" style="left:802px;top:192px;width:76px">5</div>
<div class="c r" style="left:882px;top:192px;width:74px">5</div>
<div class="c r" style="left:960px;top:192px;width:74px">4</div>
<div class="c r" style="left:1038px;top:192px;width:74px">4</div>
<div class="c r" style="left:1116px;top:192px;width:74px">3</div>
<div class="c r" style="left:1194px;top:192px;width:74px">2</div>
<div class="c r" style="left:1272px;top:192px;width:74px">1</div>
<div class="c r" style="left:1350px;top:192px;width:74px">1</div>
<div class="c r" style="left:1428px;top:192px;width:81px">1</div>
<div class="c" style="left:37px;top:216px;width:125px">Sprint 1</div>
<div class="c" style="left:170px;top:216px;width:150px">3-1</div>
<div class="c r" style="left:325px;top:216px;width:73px">9</div>
<div class="c r" style="left:402px;top:216px;width:76px">9</div>
<div class="c r" style="left:482px;top:216px;width:76px">9</div>
<div class="c r" style="left:562px;top:216px;width:76px">9</div>
<div class="c r" style="left:642px;top:216px;width:76px">8</div>
<div class="c r" style="left:722px;top:216px;width:76px">8</div>
<div class="c r" style="left:802px;top:216px;width:76px">8</div>
<div class="c r" style="left:882px;top:216px;width:74px">8</div>
<div class="c r" style="left:960px;top:216px;width:74px">7</div>
<div class="c r" style="left:1038px;top:216px;width:74px">6</div>
<div class="c r" style="left:1116px;top:216px;width:74px">4</div>
<div class="c r" style="left:1194px;top:216px;width:74px">2</div>
<div class="c r" style="left:1272px;top:216px;width:74px">1</div>
<div class="c r" style="left:1350px;top:216px;width:74px">1</div>
<div class="c r" style="left:1428px;top:216px;width:81px">1</div>
<div class="c" style="left:37px;top:240px;width:125px">Sprint 1</div>
<div class="c" style="left:170px;top:240px;width:150px">3-2</div>
<div class="c r" style="left:325px;top:240px;width:73px">9</div>
<div class="c r" style="left:402px;top:240px;width:76px">8</div>
<div class="c r" style="left:482px;top:240px;width:76px">8</div>
<div class="c r" style="left:562px;top:240px;width:76px">8</div>
<div class="c r" style="left:642px;top:240px;width:76px">7</div>
<div class="c r" style="left:722px;top:240px;width:76px">6</div>
<div class="c r" style="left:802px;top:240px;width:76px">6</div>
<div class="c r" style="left:882px;top:240px;width:74px">6</div>
<div class="c r" style="left:960px;top:240px;width:74px">6</div>
<div class="c r" style="left:1038px;top:240px;width:74px">6</div>
<div class="c r" style="left:1116px;top:240px;width:74px">4</div>
<div class="c r" style="left:1194px;top:240px;width:74px">2</div>
<div class="c r" style="left:1272px;top:240px;width:74px">0</div>
<div class="c r" style="left:1350px;top:240px;width:74px">0</div>
<div class="c r" style="left:1428px;top:240px;width:81px">0</div>
<div class="c" style="left:37px;top:264px;width:125px">Sprint 1</div>
<div class="c" style="left:170px;top:264px;width:150px">3-3</div>
<div class="c r" style="left:325px;top:264px;width:73px">10</div>
<div class="c r" style="left:402px;top:264px;width:76px">9</div>
<div class="c r" style="left:482px;top:264px;width:76px">7</div>
<div class="c r" style="left:562px;top:264px;width:76px">7</div>
<div class="c r" style="left:642px;top:264px;width:76px">6</div>
<div class="c r" style="left:722px;top:264px;width:76px">5</div>
<div class="c r" style="left:802px;top:264px;width:76px">5</div>
<div class="c r" style="left:882px;top:264px;width:74px">5</div>
<div class="c r" style="left:960px;top:264px;width:74px">4</div>
<div class="c r" style="left:1038px;top:264px;width:74px">4</div>
<div class="c r" style="left:1116px;top:264px;width:74px">3</div>
<div class="c r" style="left:1194px;top:264px;width:74px">2</div>
<div class="c r" style="left:1272px;top:264px;width:74px">0</div>
<div class="c r" style="left:1350px;top:264px;width:74px">0</div>
<div class="c r" style="left:1428px;top:264px;width:81px">0</div>
<div class="c" style="left:37px;top:288px;width:125px">Sprint 1</div>
<div class="c" style="left:170px;top:288px;width:150px">4-1</div>
<div class="c r" style="left:325px;top:288px;width:73px">9</div>
<div class="c r" style="left:402px;top:288px;width:76px">7</div>
<div class="c r" style="left:482px;top:288px;width:76px">6</div>
<div class="c r" style="left:562px;top:288px;width:76px">5</div>
<div class="c r" style="left:642px;top:288px;width:76px">4</div>
<div class="c r" style="left:722px;top:288px;width:76px">4</div>
<div class="c r" style="left:802px;top:288px;width:76px">4</div>
<div class="c r" style="left:882px;top:288px;width:74px">4</div>
<div class="c r" style="left:960px;top:288px;width:74px">4</div>
<div class="c r" style="left:1038px;top:288px;width:74px">4</div>
<div class="c r" style="left:1116px;top:288px;width:74px">3</div>
<div class="c r" style="left:1194px;top:288px;width:74px">1</div>
<div class="c r" style="left:1272px;top:288px;width:74px">1</div>
<div class="c r" style="left:1350px;top:288px;width:74px">1</div>
<div class="c r" style="left:1428px;top:288px;width:81px">1</div>
<div class="c" style="left:37px;top:312px;width:125px">Sprint 1</div>
<div class="c" style="left:170px;top:312px;width:150px">4-2</div>
<div class="c r" style="left:325px;top:312px;width:73px">9</div>
<div class="c r" style="left:402px;top:312px;width:76px">9</div>
<div class="c r" style="left:482px;top:312px;width:76px">8</div>
<div class="c r" style="left:562px;top:312px;width:76px">8</div>
<div class="c r" style="left:642px;top:312px;width:76px">7</div>
<div class="c r" style="left:722px;top:312px;width:76px">7</div>
<div class="c r" style="left:802px;top:312px;width:76px">7</div>
<div class="c r" style="left:882px;top:312px;width:74px">7</div>
<div class="c r" style="left:960px;top:312px;width:74px">6</div>
<div class="c r" style="left:1038px;top:312px;width:74px">5</div>
<div class="c r" style="left:1116px;top:312px;width:74px">3</div>
<div class="c r" style="left:1194px;top:312px;width:74px">1</div>
<div class="c r" style="left:1272px;top:312px;width:74px">0</div>
<div class="c r" style="left:1350px;top:312px;width:74px">0</div>
<div class="c r" style="left:1428px;top:312px;width:81px">0</div>
<div class="c" style="left:37px;top:336px;width:125px">Sprint 1</div>
<div class="c" style="left:170px;top:336px;width:150px">4-3</div>
<div class="c r" style="left:325px;top:336px;width:73px">3</div>
<div class="c r" style="left:402px;top:336px;width:76px">3</div>
<div class="c r" style="left:482px;top:336px;width:76px">2</div>
<div class="c r" style="left:562px;top:336px;width:76px">2</div>
<div class="c r" style="left:642px;top:336px;width:76px">1</div>
<div class="c r" style="left:722px;top:336px;width:76px">1</div>
<div class="c r" style="left:802px;top:336px;width:76px">1</div>
<div class="c r" style="left:882px;top:336px;width:74px">1</div>
<div class="c r" style="left:960px;top:336px;width:74px">1</div>
<div class="c r" style="left:1038px;top:336px;width:74px">1</div>
<div class="c r" style="left:1116px;top:336px;width:74px">0</div>
<div class="c r" style="left:1194px;top:336px;width:74px">0</div>
<div class="c r" style="left:1272px;top:336px;width:74px">0</div>
<div class="c r" style="left:1350px;top:336px;width:74px">0</div>
<div class="c r" style="left:1428px;top:336px;width:81px">0</div>
<div class="c" style="left:37px;top:360px;width:125px">Sprint 1</div>
<div class="c" style="left:170px;top:360px;width:150px">4-4</div>
<div class="c r" style="left:325px;top:360px;width:73px">7</div>
<div class="c r" style="left:402px;top:360px;width:76px">6</div>
<div class="c r" style="left:482px;top:360px;width:76px">5</div>
<div class="c r" style="left:562px;top:360px;width:76px">5</div>
<div class="c r" style="left:642px;top:360px;width:76px">4</div>
<div class="c r" style="left:722px;top:360px;width:76px">4</div>
<div class="c r" style="left:802px;top:360px;width:76px">4</div>
<div class="c r" style="left:882px;top:360px;width:74px">4</div>
<div class="c r" style="left:960px;top:360px;width:74px">3</div>
<div class="c r" style="left:1038px;top:360px;width:74px">2</div>
<div class="c r" style="left:1116px;top:360px;width:74px">1</div>
<div class="c r" style="left:1194px;top:360px;width:74px">0</div>
<div class="c r" style="left:1272px;top:360px;width:74px">0</div>
<div class="c r" style="left:1350px;top:360px;width:74px">0</div>
<div class="c r" style="left:1428px;top:360px;width:81px">0</div>
<div class="c" style="left:37px;top:384px;width:125px">Sprint 1</div>
<div class="c" style="left:170px;top:384px;width:150px">5-1</div>
<div class="c r" style="left:325px;top:384px;width:73px">7</div>
<div class="c r" style="left:402px;top:384px;width:76px">6</div>
<div class="c r" style="left:482px;top:384px;width:76px">6</div>
<div class="c r" style="left:562px;top:384px;width:76px">6</div>
<div class="c r" style="left:642px;top:384px;width:76px">5</div>
<div class="c r" style="left:722px;top:384px;width:76px">5</div>
<div class="c r" style="left:802px;top:384px;width:76px">5</div>
<div class="c r" style="left:882px;top:384px;width:74px">5</div>
<div class="c r" style="left:960px;top:384px;width:74px">4</div>
<div class="c r" style="left:1038px;top:384px;width:74px">4</div>
<div class="c r" style="left:1116px;top:384px;width:74px">3</div>
<div class="c r" style="left:1194px;top:384px;width:74px">2</div>
<div class="c r" style="left:1272px;top:384px;width:74px">2</div>
<div class="c r" style="left:1350px;top:384px;width:74px">2</div>
<div class="c r" style="left:1428px;top:384px;width:81px">2</div>
<div class="c" style="left:37px;top:408px;width:125px">Sprint 1</div>
<div class="c" style="left:170px;top:408px;width:150px">5-2</div>
<div class="c r" style="left:325px;top:408px;width:73px">10</div>
<div class="c r" style="left:402px;top:408px;width:76px">9</div>
<div class="c r" style="left:482px;top:408px;width:76px">9</div>
<div class="c r" style="left:562px;top:408px;width:76px">9</div>
<div class="c r" style="left:642px;top:408px;width:76px">8</div>
<div class="c r" style="left:722px;top:408px;width:76px">7</div>
<div class="c r" style="left:802px;top:408px;width:76px">7</div>
<div class="c r" style="left:882px;top:408px;width:74px">7</div>
<div class="c r" style="left:960px;top:408px;width:74px">5</div>
<div class="c r" style="left:1038px;top:408px;width:74px">5</div>
<div class="c r" style="left:1116px;top:408px;width:74px">3</div>
<div class="c r" style="left:1194px;top:408px;width:74px">1</div>
<div class="c r" style="left:1272px;top:408px;width:74px">1</div>
<div class="c r" style="left:1350px;top:408px;width:74px">1</div>
<div class="c r" style="left:1428px;top:408px;width:81px">1</div>
<div class="t" style="left:1571.5px;top:100.48px;font-size:15.5px;color:#000;font-weight:400;font-family:'Liberation Sans';letter-spacing:0px;transform:scaleX(1.0516);transform-origin:0 0;">1. Use story points or hours as required</div>
<div class="t" style="left:1571.5px;top:148.48px;font-size:15.5px;color:#000;font-weight:400;font-family:'Liberation Sans';letter-spacing:0px;transform:scaleX(1.0500);transform-origin:0 0;">2. Adjust to match days in Sprint</div>
<div class="t" style="left:1571.5px;top:196.48px;font-size:15.5px;color:#000;font-weight:400;font-family:'Liberation Sans';letter-spacing:0px;transform:scaleX(1.0422);transform-origin:0 0;">3. Add a new tab per Sprint as required</div>
<div class="t" style="left:1571.5px;top:244.48px;font-size:15.5px;color:#000;font-weight:400;font-family:'Liberation Sans';letter-spacing:0px;transform:scaleX(1.0386);transform-origin:0 0;">4. This example manages to burn all</div>
<div class="t" style="left:1571.5px;top:268.48px;font-size:15.5px;color:#000;font-weight:400;font-family:'Liberation Sans';letter-spacing:0px;transform:scaleX(1.0832);transform-origin:0 0;">but 7 story points in total</div>
<div class="t" style="left:1571.5px;top:316.48px;font-size:15.5px;color:#000;font-weight:400;font-family:'Liberation Sans';letter-spacing:0px;transform:scaleX(1.0753);transform-origin:0 0;">5. Add / delete rows for tasks / stories</div>
<div class="t" style="left:1571.5px;top:364.48px;font-size:15.5px;color:#000;font-weight:400;font-family:'Liberation Sans';letter-spacing:0px;transform:scaleX(1.0675);transform-origin:0 0;">6. Table below self populates</div>
<div class="t" style="left:1571.5px;top:412.48px;font-size:15.5px;color:#000;font-weight:400;font-family:'Liberation Sans';letter-spacing:0px;transform:scaleX(1.0567);transform-origin:0 0;">7. Typically nobody is weekend working</div>
<div class="ab" style="left:34px;top:671px;width:1478px;height:25px;background:#e2efda"></div>
<div class="ab" style="left:34px;top:695px;width:1478px;height:25px;background:#fce4d6"></div>
<div class="ab" style="left:34px;top:719px;width:1478px;height:25px;background:#d9e1f2"></div>
<div class="ab" style="left:34px;top:743px;width:1478px;height:25px;background:#d6dce4"></div>
<div class="ab" style="left:324px;top:671px;width:1189px;height:1px;background:#a2afc8"></div>
<div class="ab" style="left:324px;top:695px;width:1189px;height:1px;background:#a2afc8"></div>
<div class="ab" style="left:324px;top:719px;width:1189px;height:1px;background:#a2afc8"></div>
<div class="ab" style="left:324px;top:743px;width:1189px;height:1px;background:#a2afc8"></div>
<div class="ab" style="left:324px;top:767px;width:1189px;height:1px;background:#a2afc8"></div>
<div class="ab" style="left:324px;top:671px;width:1px;height:97px;background:#a2afc8"></div>
<div class="ab" style="left:401px;top:671px;width:1px;height:97px;background:#a2afc8"></div>
<div class="ab" style="left:481px;top:671px;width:1px;height:97px;background:#a2afc8"></div>
<div class="ab" style="left:561px;top:671px;width:1px;height:97px;background:#a2afc8"></div>
<div class="ab" style="left:641px;top:671px;width:1px;height:97px;background:#a2afc8"></div>
<div class="ab" style="left:721px;top:671px;width:1px;height:97px;background:#a2afc8"></div>
<div class="ab" style="left:801px;top:671px;width:1px;height:97px;background:#a2afc8"></div>
<div class="ab" style="left:881px;top:671px;width:1px;height:97px;background:#a2afc8"></div>
<div class="ab" style="left:959px;top:671px;width:1px;height:97px;background:#a2afc8"></div>
<div class="ab" style="left:1037px;top:671px;width:1px;height:97px;background:#a2afc8"></div>
<div class="ab" style="left:1115px;top:671px;width:1px;height:97px;background:#a2afc8"></div>
<div class="ab" style="left:1193px;top:671px;width:1px;height:97px;background:#a2afc8"></div>
<div class="ab" style="left:1271px;top:671px;width:1px;height:97px;background:#a2afc8"></div>
<div class="ab" style="left:1349px;top:671px;width:1px;height:97px;background:#a2afc8"></div>
<div class="ab" style="left:1427px;top:671px;width:1px;height:97px;background:#a2afc8"></div>
<div class="ab" style="left:1512px;top:671px;width:1px;height:97px;background:#a2afc8"></div>
<div class="ab" style="left:34px;top:672px;width:290px;height:23px;overflow:hidden"><div class="c" style="left:-30px;top:0;font-weight:bold;overflow:visible">Sprint remaining working points (Forecast)</div></div>
<div class="c r" style="left:325px;top:672px;width:73px">114</div>
<div class="c r" style="left:402px;top:672px;width:76px">105.9</div>
<div class="c r" style="left:482px;top:672px;width:76px">97.7</div>
<div class="c r" style="left:562px;top:672px;width:76px">89.6</div>
<div class="c r" style="left:642px;top:672px;width:76px">81.4</div>
<div class="c r" style="left:722px;top:672px;width:76px">73.3</div>
<div class="c r" style="left:802px;top:672px;width:76px">65.1</div>
<div class="c r" style="left:882px;top:672px;width:74px">57.0</div>
<div class="c r" style="left:960px;top:672px;width:74px">48.9</div>
<div class="c r" style="left:1038px;top:672px;width:74px">40.7</div>
<div class="c r" style="left:1116px;top:672px;width:74px">32.6</div>
<div class="c r" style="left:1194px;top:672px;width:74px">24.4</div>
<div class="c r" style="left:1272px;top:672px;width:74px">16.3</div>
<div class="c r" style="left:1350px;top:672px;width:74px">8.1</div>
<div class="c r" style="left:1428px;top:672px;width:81px">0.0</div>
<div class="ab" style="left:34px;top:696px;width:290px;height:23px;overflow:hidden"><div class="c" style="left:-30px;top:0;font-weight:bold;overflow:visible">Sprint remaining working points (Actual)</div></div>
<div class="c r" style="left:325px;top:696px;width:73px">114</div>
<div class="c r" style="left:402px;top:696px;width:76px">105.0</div>
<div class="c r" style="left:482px;top:696px;width:76px">94.0</div>
<div class="c r" style="left:562px;top:696px;width:76px">93.0</div>
<div class="c r" style="left:642px;top:696px;width:76px">79.0</div>
<div class="c r" style="left:722px;top:696px;width:76px">76.0</div>
<div class="c r" style="left:802px;top:696px;width:76px">76.0</div>
<div class="c r" style="left:882px;top:696px;width:74px">76.0</div>
<div class="c r" style="left:960px;top:696px;width:74px">61.0</div>
<div class="c r" style="left:1038px;top:696px;width:74px">58.0</div>
<div class="c r" style="left:1116px;top:696px;width:74px">38.0</div>
<div class="c r" style="left:1194px;top:696px;width:74px">19.0</div>
<div class="c r" style="left:1272px;top:696px;width:74px">7.0</div>
<div class="c r" style="left:1350px;top:696px;width:74px">7.0</div>
<div class="c r" style="left:1428px;top:696px;width:81px">7.0</div>
<div class="ab" style="left:34px;top:720px;width:290px;height:23px;overflow:hidden"><div class="c" style="left:-30px;top:0;font-weight:bold;overflow:visible">Sprint points actually burnt down</div></div>
<div class="c r" style="left:325px;top:720px;width:73px">0</div>
<div class="c r" style="left:402px;top:720px;width:76px">9.0</div>
<div class="c r" style="left:482px;top:720px;width:76px">11.0</div>
<div class="c r" style="left:562px;top:720px;width:76px">1.0</div>
<div class="c r" style="left:642px;top:720px;width:76px">14.0</div>
<div class="c r" style="left:722px;top:720px;width:76px">3.0</div>
<div class="c r" style="left:802px;top:720px;width:76px">0.0</div>
<div class="c r" style="left:882px;top:720px;width:74px">0.0</div>
<div class="c r" style="left:960px;top:720px;width:74px">15.0</div>
<div class="c r" style="left:1038px;top:720px;width:74px">3.0</div>
<div class="c r" style="left:1116px;top:720px;width:74px">20.0</div>
<div class="c r" style="left:1194px;top:720px;width:74px">19.0</div>
<div class="c r" style="left:1272px;top:720px;width:74px">12.0</div>
<div class="c r" style="left:1350px;top:720px;width:74px">0.0</div>
<div class="c r" style="left:1428px;top:720px;width:81px">0.0</div>
<div class="ab" style="left:34px;top:744px;width:290px;height:23px;overflow:hidden"><div class="c" style="left:-30px;top:0;font-weight:bold;overflow:visible">Sprint points burnt accrued total</div></div>
<div class="c r" style="left:325px;top:744px;width:73px">0</div>
<div class="c r" style="left:402px;top:744px;width:76px">9.0</div>
<div class="c r" style="left:482px;top:744px;width:76px">20.0</div>
<div class="c r" style="left:562px;top:744px;width:76px">21.0</div>
<div class="c r" style="left:642px;top:744px;width:76px">35.0</div>
<div class="c r" style="left:722px;top:744px;width:76px">38.0</div>
<div class="c r" style="left:802px;top:744px;width:76px">38.0</div>
<div class="c r" style="left:882px;top:744px;width:74px">38.0</div>
<div class="c r" style="left:960px;top:744px;width:74px">53.0</div>
<div class="c r" style="left:1038px;top:744px;width:74px">56.0</div>
<div class="c r" style="left:1116px;top:744px;width:74px">76.0</div>
<div class="c r" style="left:1194px;top:744px;width:74px">95.0</div>
<div class="c r" style="left:1272px;top:744px;width:74px">107.0</div>
<div class="c r" style="left:1350px;top:744px;width:74px">107.0</div>
<div class="c r" style="left:1428px;top:744px;width:81px">107.0</div>
<div class="ab" style="left:1272px;top:792px;width:240px;height:23px;background:#fff"></div>
<div class="ab" style="left:1272px;top:840px;width:240px;height:23px;background:#fff"></div>
<div class="t" style="left:1275.4px;top:797.08px;font-size:15.5px;color:#000;font-weight:700;font-family:'Liberation Sans';letter-spacing:0px;transform:scaleX(1.0126);transform-origin:0 0;">Avg. story point burn per day &gt;&gt;</div>
<div class="ab" style="left:1513px;top:791px;width:54px;height:24px;background:#d9e1f2"></div>
<div class="c r" style="left:1513px;top:792px;width:51px">10.7</div>
<div class="t" style="left:1275.4px;top:844.08px;font-size:15.5px;color:#000;font-weight:700;font-family:'Liberation Sans';letter-spacing:0px;transform:scaleX(0.9977);transform-origin:0 0;">Points to carry to next Sprint &gt;&gt;</div>
<div class="ab" style="left:1513px;top:839px;width:54px;height:24px;background:#d9e1f2"></div>
<div class="c r" style="left:1513px;top:840px;width:51px">7.0</div>
</div>
<div class="ab" style="left:1898.3px;top:119px;width:21.7px;height:862px;background:linear-gradient(#dde8e8 0%,#e0e8e7 40%,#e8e7e3 100%)"></div>
<div class="ab" style="left:1901px;top:120px;width:17px;height:860.5px;background:#f7f7f7;border-radius:8.5px"></div>
<svg class="ab" style="left:1904.5px;top:124px" width="10" height="8" viewBox="0 0 10 8"><path d="M0.5 7.5 L5 1 L9.5 7.5 Z" fill="#6e6e6e" stroke="#6e6e6e" stroke-width="0.8" stroke-linejoin="round"/></svg>
<div class="ab" style="left:1905px;top:159px;width:9px;height:777px;background:#6e6e6e;border-radius:4.5px"></div>
<svg class="ab" style="left:1904.5px;top:968.5px" width="10" height="8" viewBox="0 0 10 8"><path d="M0.5 0.5 L5 7 L9.5 0.5 Z" fill="#6e6e6e" stroke="#6e6e6e" stroke-width="0.8" stroke-linejoin="round"/></svg>
<div class="ab" style="left:0;top:978px;width:1920px;height:32px;background:linear-gradient(90deg,#dce8e9 0%,#dfe8e7 18%,#e5e7e3 30%,#e9e7e3 60%,#ebe7e2 100%)"></div>
<div class="ab" style="left:771px;top:976px;width:177px;height:30px;background:#f6f9f9;border-radius:0 0 6px 6px"></div>
<div class="ab" style="left:0;top:1009.5px;width:1920px;height:1px;background:#d5d5d5"></div>
<svg class="ab" style="left:26px;top:988px" width="12" height="13" viewBox="0 0 12 13" fill="none" stroke="#a0a0a0" stroke-width="1.1"><path d="M8 1.5 L3 6.5 L8 11.5"/></svg>
<svg class="ab" style="left:59px;top:988px" width="12" height="13" viewBox="0 0 12 13" fill="none" stroke="#333" stroke-width="1.1"><path d="M4 1.5 L9 6.5 L4 11.5"/></svg>
<div class="ab" style="left:293px;top:982.2px;width:78px;height:23.3px;background:#f8cbad;border-radius:4px"></div>
<div class="ab" style="left:475px;top:982.2px;width:139px;height:23.3px;background:#c6e0b4;border-radius:4px"></div>
<div class="t" style="left:126.6px;top:987.82px;font-size:13.8px;color:#262626;font-weight:400;font-family:'Liberation Sans';letter-spacing:0px;transform:scaleX(0.9805);transform-origin:0 0;">Status Report DDMMYY</div>
<div class="t" style="left:302.4px;top:987.82px;font-size:13.8px;color:#262626;font-weight:400;font-family:'Liberation Sans';letter-spacing:0px;transform:scaleX(0.9206);transform-origin:0 0;">RAID_Log</div>
<div class="t" style="left:389.2px;top:987.82px;font-size:13.8px;color:#262626;font-weight:400;font-family:'Liberation Sans';letter-spacing:0px;transform:scaleX(0.9395);transform-origin:0 0;">RAID_Pivot</div>
<div class="t" style="left:485px;top:987.82px;font-size:13.8px;color:#262626;font-weight:400;font-family:'Liberation Sans';letter-spacing:0px;transform:scaleX(0.8998);transform-origin:0 0;">POaP_XLS_Example</div>
<div class="t" style="left:632px;top:987.82px;font-size:13.8px;color:#262626;font-weight:400;font-family:'Liberation Sans';letter-spacing:0px;transform:scaleX(0.8985);transform-origin:0 0;">POaP_PPT_Example</div>
<div class="ab" style="left:288.6px;top:985.7px;width:1px;height:17px;background:#cfcfcf"></div>
<div class="ab" style="left:375px;top:985.7px;width:1px;height:17px;background:#cfcfcf"></div>
<div class="ab" style="left:470.5px;top:985.7px;width:1px;height:17px;background:#cfcfcf"></div>
<div class="ab" style="left:618.7px;top:985.7px;width:1px;height:17px;background:#cfcfcf"></div>
<div class="ab" style="left:766.7px;top:985.7px;width:1px;height:17px;background:#cfcfcf"></div>
<div class="ab" style="left:952.5px;top:985.7px;width:1px;height:17px;background:#cfcfcf"></div>
<div class="t" style="left:779.3px;top:984.63px;font-size:13.2px;color:#1f1f1f;font-weight:700;font-family:'Liberation Sans';letter-spacing:0px;transform:scaleX(1.0018);transform-origin:0 0;">Sprint 1 Burn Down Table</div>
<div class="ab" style="left:779.3px;top:1001px;width:160.5px;height:2px;background:#107c41"></div>
<div class="ab" style="left:957px;top:982.2px;width:119px;height:23.3px;background:#fbe3d6"></div>
<div class="ab" style="left:957px;top:978px;width:118px;height:30px;overflow:hidden">
<div class="t" style="left:9px;top:9.72px;font-size:13.8px;color:#262626;font-weight:400;font-family:'Liberation Sans';letter-spacing:0px;transform:scaleX(1.0305);transform-origin:0 0;">Sprint 1 Burn Down Chart</div>
</div>
<div class="ab" style="left:1085.5px;top:992.5px;width:2.6px;height:2.6px;background:#333;border-radius:50%"></div>
<div class="ab" style="left:1090px;top:992.5px;width:2.6px;height:2.6px;background:#333;border-radius:50%"></div>
<div class="ab" style="left:1094.5px;top:992.5px;width:2.6px;height:2.6px;background:#333;border-radius:50%"></div>
<svg class="ab" style="left:1116px;top:988px" width="13" height="13" viewBox="0 0 13 13" fill="none" stroke="#333" stroke-width="1.1"><path d="M6.5 1 V12 M1 6.5 H12"/></svg>
<div class="ab" style="left:1154px;top:989.5px;width:2.4px;height:2.4px;background:#333;border-radius:50%"></div>
<div class="ab" style="left:1154px;top:994px;width:2.4px;height:2.4px;background:#333;border-radius:50%"></div>
<div class="ab" style="left:1154px;top:998.5px;width:2.4px;height:2.4px;background:#333;border-radius:50%"></div>
<div class="ab" style="left:1171px;top:984.8px;width:728px;height:17px;background:#f8f8f8;border-radius:8.5px"></div>
<svg class="ab" style="left:1175px;top:989px" width="10" height="10" viewBox="0 0 10 10"><path d="M8.5 1 L1.5 5 L8.5 9 Z" fill="#6e6e6e"/></svg>
<div class="ab" style="left:1201px;top:989px;width:640px;height:9px;background:#6e6e6e;border-radius:4.5px"></div>
<div class="ab" style="left:0;top:1010.5px;width:1920px;height:21.5px;background:#f3f3f3"></div>
<div class="ab" style="left:0;top:1031.5px;width:1920px;height:1px;background:#cfd3d3"></div>
<div class="t" style="left:11.5px;top:1016.46px;font-size:10.8px;color:#333;font-weight:400;font-family:'Liberation Sans';letter-spacing:0px;transform:scaleX(0.9738);transform-origin:0 0;">Ready</div>
<svg class="ab" style="left:61px;top:1014px" width="16" height="15" viewBox="0 0 16 15" fill="none" stroke="#333" stroke-width="1"><circle cx="7" cy="2.3" r="1.6"/><path d="M1.5 4.5 C4 5.5 10 5.5 12.5 4.5"/><path d="M5.5 5.5 V9 L3.5 14 M8.5 5.5 V8.5"/><path d="M9.5 9.5 L14.5 14.5 M14.5 9.5 L9.5 14.5"/></svg>
<div class="t" style="left:80.6px;top:1015.69px;font-size:11px;color:#333;font-weight:700;font-family:'Liberation Sans';letter-spacing:0px;transform:scaleX(0.9509);transform-origin:0 0;">Accessibility: Investigate</div>
<div class="ab" style="left:1620.5px;top:1010.7px;width:39.5px;height:21px;background:#dedede"></div>
<svg class="ab" style="left:1633px;top:1014px" width="14" height="14" viewBox="0 0 14 14" fill="none" stroke="#333" stroke-width="1"><rect x="0.5" y="0.5" width="12.5" height="12.5"/><path d="M0.5 4.7 H13 M0.5 8.8 H13 M4.7 0.5 V13 M8.8 0.5 V13"/></svg>
<svg class="ab" style="left:1673px;top:1014px" width="15" height="14" viewBox="0 0 15 14" fill="none" stroke="#333" stroke-width="1"><rect x="0.5" y="0.5" width="13.5" height="12.5"/><rect x="3" y="3" width="8.5" height="7.5"/><path d="M4.5 5 H10 M4.5 7 H10 M4.5 9 H10"/></svg>
<svg class="ab" style="left:1713px;top:1014px" width="15" height="14" viewBox="0 0 15 14" fill="none" stroke="#333" stroke-width="1"><rect x="0.5" y="0.5" width="13.5" height="12.5"/><path d="M4.5 0.5 V7 H0.5 M8.5 0.5 V5 H4.5"/></svg>
<div class="ab" style="left:1746px;top:1020.5px;width:8px;height:1.2px;background:#333"></div>
<div class="ab" style="left:1759.4px;top:1020.5px;width:99.4px;height:1px;background:#777"></div>
<div class="ab" style="left:1809.5px;top:1016.3px;width:5.5px;height:10.5px;background:#555;border-radius:1px"></div>
<div class="ab" style="left:1864.4px;top:1020.5px;width:7.3px;height:1.2px;background:#333"></div><div class="ab" style="left:1867.5px;top:1017px;width:1.2px;height:8px;background:#333"></div>
<div class="t" style="left:1886px;top:1016.36px;font-size:10.8px;color:#333;font-weight:400;font-family:'Liberation Sans';letter-spacing:0px;transform:scaleX(0.9412);transform-origin:0 0;">120%</div>
<div class="ab" style="left:1824px;top:989.4px;width:100px;height:29.4px;background:#f8f6f4;border:1px solid #e2dedb;border-radius:6px;box-shadow:0 1px 3px rgba(0,0,0,0.10)"></div>
<div class="t" style="left:1833.4px;top:998.14px;font-size:12px;color:#222;font-weight:400;font-family:'Liberation Sans';letter-spacing:0px;transform:scaleX(1.0081);transform-origin:0 0;">Show desktop</div>
<div class="ab" style="left:0;top:1032px;width:1920px;height:48px;background:linear-gradient(90deg,#c6e1e7 0%,#cae2e4 14%,#dde6d6 17%,#f2e6c8 19.5%,#f3e2d2 22%,#f0e2da 35%,#efe6de 100%)"></div>
<svg class="ab" style="left:18px;top:1044px" width="26" height="19" viewBox="0 0 26 19"><defs><linearGradient id="cld" x1="0" y1="0" x2="0" y2="1"><stop offset="0" stop-color="#dfe6f7"/><stop offset="1" stop-color="#a6b9e6"/></linearGradient></defs><path d="M5.5 16.5 C2 16.5 0.8 13.8 1.2 12 C1.6 10.2 3 9.3 4.6 9.2 C5 5.5 8 2.5 12 2.5 C15 2.5 17.5 4.5 18.3 7 C21.8 7 24.8 9.2 24.8 12.2 C24.8 14.8 22.8 16.5 20.5 16.5 Z" fill="url(#cld)" stroke="#9fb2de" stroke-width="0.6"/></svg>
<div class="t" style="left:50.8px;top:1042.49px;font-size:11px;color:#1a1a1a;font-weight:400;font-family:'Liberation Sans';letter-spacing:0px;transform:scaleX(0.9439);transform-origin:0 0;">16°C</div>
<div class="t" style="left:50.8px;top:1058.52px;font-size:11.2px;color:#4a4a4a;font-weight:400;font-family:'Liberation Sans';letter-spacing:0px;transform:scaleX(1.0681);transform-origin:0 0;">Cloudy</div>
<svg class="ab" style="left:550px;top:1044px" width="24" height="24" viewBox="0 0 24 24"><rect x="0" y="0" width="11.3" height="11.3" fill="#2ea7f2"/><rect x="12.7" y="0" width="11.3" height="11.3" fill="#2ea7f2"/><rect x="0" y="12.7" width="11.3" height="11.3" fill="#1d8de0"/><rect x="12.7" y="12.7" width="11.3" height="11.3" fill="#1d8de0"/></svg>
<div class="ab" style="left:588px;top:1041px;width:218px;height:31px;background:#fbf6f1;border:1px solid #e3ddd8;border-radius:16px"></div>
<svg class="ab" style="left:598px;top:1047px" width="19" height="19" viewBox="0 0 19 19" fill="none" stroke="#222" stroke-width="1.8"><circle cx="8" cy="8" r="5.8"/><line x1="12.2" y1="12.2" x2="17" y2="17"/></svg>
<div class="t" style="left:624.5px;top:1049.22px;font-size:13.8px;color:#555;font-weight:400;font-family:'Liberation Sans';letter-spacing:0px;transform:scaleX(0.9149);transform-origin:0 0;">Search</div>
<svg class="ab" style="left:817px;top:1043px" width="26" height="26" viewBox="0 0 26 26"><rect x="8" y="3" width="15" height="14" fill="#f2f2f2" stroke="#ccc" stroke-width="0.5"/><rect x="3" y="9" width="14" height="14" fill="#222"/><rect x="8" y="9" width="9" height="8" fill="#bdbdbd"/></svg>
<svg class="ab" style="left:861px;top:1043px" width="28" height="26" viewBox="0 0 28 26"><circle cx="21" cy="6" r="3.5" fill="#7b83eb"/><rect x="16" y="10" width="10" height="11" rx="4" fill="#5b5fc7"/><circle cx="14" cy="5" r="4" fill="#7b83eb"/><rect x="8" y="9" width="13" height="14" rx="3" fill="#7b83eb"/><rect x="2" y="7" width="12" height="12" rx="1.5" fill="#4b53bc"/><path d="M5 10 H11 M8 10 V16.5" stroke="#fff" stroke-width="1.8"/></svg>
<svg class="ab" style="left:906px;top:1044px" width="26" height="24" viewBox="0 0 26 24"><path d="M1 3 H10 L12 5 H25 V21 H1 Z" fill="#e8b222"/><rect x="1" y="7" width="24" height="14" fill="#ffd24a"/><rect x="7" y="15" width="12" height="4" fill="#1a6fc4"/></svg>
<div class="ab" style="left:915px;top:1072px;width:8px;height:2px;background:#777;border-radius:1px"></div>
<svg class="ab" style="left:950px;top:1043px" width="26" height="25" viewBox="0 0 26 25"><defs><linearGradient id="cpA" x1="0" y1="1" x2="1" y2="0"><stop offset="0" stop-color="#f5c12e"/><stop offset="0.45" stop-color="#3cc28a"/><stop offset="1" stop-color="#1e7be0"/></linearGradient><linearGradient id="cpB" x1="0" y1="1" x2="1" y2="0"><stop offset="0" stop-color="#f7713a"/><stop offset="0.5" stop-color="#e04ba6"/><stop offset="1" stop-color="#9a5cf0"/></linearGradient></defs>
<path d="M9 2 C7 2 6 3 5.5 5 L1.5 17 C1 19 2 20 4 20 H9 L14 4 C14.5 2.5 13.5 2 12 2 Z" fill="url(#cpA)"/>
<path d="M17 23 C19 23 20 22 20.5 20 L24.5 8 C25 6 24 5 22 5 H17 L12 21 C11.5 22.5 12.5 23 14 23 Z" fill="url(#cpB)"/>
<path d="M9.5 2 H16 C17.5 2 18 3 17.5 4.5 L16.5 7 H13.5 Z" fill="#2a86e8"/><path d="M16.5 23 H10 C8.5 23 8 22 8.5 20.5 L9.5 18 H12.5 Z" fill="#f5793a"/></svg>
<svg class="ab" style="left:994px;top:1043px" width="26" height="26" viewBox="0 0 26 26"><defs><linearGradient id="edA" x1="0" y1="1" x2="1" y2="0"><stop offset="0" stop-color="#0b4f9e"/><stop offset="0.55" stop-color="#1f8fd8"/><stop offset="1" stop-color="#54d46a"/></linearGradient></defs>
<circle cx="13" cy="13" r="12" fill="url(#edA)"/>
<path d="M6 14.5 C6 10 10 8 13.5 8.5 C17 9 19 11 19 13.5 C19 15 17.5 15.8 15.5 15.5 H11 C10.5 18 13 21 17.5 21 C19.5 21 21.5 20 23 18.5 C21 23 17 25 13 25 C8.5 25 6 20 6 14.5 Z" fill="#e9e3dc" opacity="0.25"/>
<path d="M9.5 16.5 C9.5 12.5 12 11 14.5 11.3 C16.5 11.6 17 13 16 14 H11.5 C11.3 17.5 14 20.5 18 20.5 C14 22.5 9.5 20.5 9.5 16.5 Z" fill="#eae6df"/></svg>
<svg class="ab" style="left:1038px;top:1043px" width="26" height="26" viewBox="0 0 26 26"><path d="M9 6 V4 C9 2 17 2 17 4 V6" fill="none" stroke="#0c3d8a" stroke-width="1.5"/><rect x="2" y="6" width="22" height="18" rx="2.5" fill="#1a4fa0"/><rect x="8" y="11" width="4.5" height="4.5" fill="#f25022"/><rect x="13.5" y="11" width="4.5" height="4.5" fill="#7fba00"/><rect x="8" y="16.5" width="4.5" height="4.5" fill="#00a4ef"/><rect x="13.5" y="16.5" width="4.5" height="4.5" fill="#ffb900"/></svg>
<svg class="ab" style="left:1082px;top:1038px" width="32" height="32" viewBox="0 0 32 32"><circle cx="13" cy="18" r="11" fill="#2c9fe3"/><text x="8.5" y="24" font-family="Liberation Sans" font-weight="bold" font-size="16" fill="#fff">?</text><circle cx="23" cy="8" r="6" fill="#f7b500"/></svg>
<svg class="ab" style="left:1125px;top:1043px" width="26" height="26" viewBox="0 0 26 26"><circle cx="13" cy="13" r="12" fill="#db4437"/><path d="M13 13 L2.6 19 A12 12 0 0 0 19 23.4 Z" fill="#0f9d58"/><path d="M13 13 L19 23.4 A12 12 0 0 0 23.4 7 L13 7 Z" fill="#ffcd40"/><circle cx="13" cy="13" r="5.5" fill="#fff"/><circle cx="13" cy="13" r="4.3" fill="#4285f4"/></svg>
<div class="ab" style="left:1134px;top:1072px;width:8px;height:2px;background:#777;border-radius:1px"></div>
<svg class="ab" style="left:1172px;top:1044px" width="22" height="25" viewBox="0 0 22 25"><path d="M1 2 L11 7 L21 2 V17.5 L11 23.5 L1 17.5 Z" fill="#c8252c"/><path d="M4.5 7.5 L11 10.8 L17.5 7.5 V15.8 L11 19.5 L4.5 15.8 Z" fill="#efe4dc"/></svg>
<svg class="ab" style="left:1216px;top:1043px" width="22" height="26" viewBox="0 0 22 26"><rect x="1" y="1" width="20" height="24" rx="2" fill="#5e7a96"/><rect x="3.5" y="3.5" width="15" height="5" fill="#a9c8e8"/><g fill="#e6eef5"><rect x="3.5" y="11" width="4" height="3"/><rect x="9" y="11" width="4" height="3"/><rect x="14.5" y="11" width="4" height="3"/><rect x="3.5" y="15.5" width="4" height="3"/><rect x="9" y="15.5" width="4" height="3"/><rect x="14.5" y="15.5" width="4" height="3"/><rect x="3.5" y="20" width="4" height="3"/><rect x="9" y="20" width="4" height="3"/><rect x="14.5" y="20" width="4" height="3"/></g></svg>
<svg class="ab" style="left:1257px;top:1043px" width="28" height="26" viewBox="0 0 28 26"><rect x="10" y="4" width="12" height="6" fill="#2e9b4f"/><rect x="14" y="11" width="12" height="6" fill="#1e7a3c"/><rect x="10" y="18" width="12" height="6" fill="#38b35c"/><rect x="1" y="4" width="14" height="16" rx="1.5" fill="#107c41"/><text x="3.5" y="17" font-family="Liberation Sans" font-weight="bold" font-size="11" fill="#fff">P</text></svg>
<div class="ab" style="left:1296px;top:1036px;width:38px;height:40px;background:rgba(255,255,255,0.55);border-radius:5px"></div>
<svg class="ab" style="left:1301px;top:1043px" width="28" height="26" viewBox="0 0 28 26"><rect x="8" y="2" width="19" height="22" rx="2" fill="#21a366"/><rect x="8" y="9" width="19" height="8" fill="#107c41"/><rect x="17" y="2" width="10" height="7" fill="#33c481"/><rect x="8" y="17" width="19" height="7" fill="#185c37"/><rect x="1" y="6" width="14" height="14" rx="1.5" fill="#107c41"/><path d="M4.5 9 L11.5 17 M11.5 9 L4.5 17" stroke="#fff" stroke-width="2"/></svg>
<div class="ab" style="left:1306px;top:1071px;width:18px;height:3px;background:#2a7fa8;border-radius:2px"></div>
<svg class="ab" style="left:1345px;top:1043px" width="28" height="26" viewBox="0 0 28 26"><path d="M13 2 C20 2 26 7 25 13 C24 16 20 15 19 17 C18 20 21 24 15 24 C7 24 2 19 2 13 C2 7 7 2 13 2 Z" fill="#5fb8e8"/><circle cx="8" cy="10" r="2" fill="#f25f5c"/><circle cx="13" cy="7" r="2" fill="#ffe066"/><circle cx="18" cy="9" r="2" fill="#70c1b3"/><path d="M20 22 L25 6" stroke="#caa45b" stroke-width="3"/></svg>
<div class="ab" style="left:1354px;top:1072px;width:8px;height:2px;background:#777;border-radius:1px"></div>
<svg class="ab" style="left:1726px;top:1050px" width="14" height="10" viewBox="0 0 14 10" fill="none" stroke="#222" stroke-width="1.3"><path d="M2 8 L7 3 L12 8"/></svg>
<svg class="ab" style="left:1756px;top:1047px" width="20" height="16" viewBox="0 0 20 16" fill="none" stroke="#222" stroke-width="1.3"><path d="M1.5 6 A12 12 0 0 1 18.5 6"/><path d="M4.5 9 A8 8 0 0 1 15.5 9"/><path d="M7.5 12 A4 4 0 0 1 12.5 12"/><circle cx="10" cy="14.2" r="0.8" fill="#222"/></svg>
<svg class="ab" style="left:1780px;top:1046px" width="20" height="18" viewBox="0 0 20 18" fill="none" stroke="#222" stroke-width="1.2"><path d="M2 6.5 H5 L9.5 2.5 V15.5 L5 11.5 H2 Z"/><path d="M12.5 6 C13.5 7.5 13.5 10.5 12.5 12"/><path d="M15 4 C17 6.5 17 11.5 15 14"/></svg>
<svg class="ab" style="left:1803px;top:1045px" width="22" height="20" viewBox="0 0 22 20"><path d="M3 6 H18 V16 H3 Z" fill="none" stroke="#222" stroke-width="1.3"/><rect x="5" y="8" width="11" height="6" fill="#222"/><rect x="18" y="9" width="2" height="4" fill="#222"/><path d="M4 2 L8 6" stroke="#222" stroke-width="1.3"/></svg>
<div class="t" style="left:1872.8px;top:1042.86px;font-size:10.8px;color:#1a1a1a;font-weight:400;font-family:'Liberation Sans';letter-spacing:0px;transform:scaleX(1.0432);transform-origin:0 0;">19:30</div>
<div class="t" style="left:1839.6px;top:1058.46px;font-size:10.8px;color:#1a1a1a;font-weight:400;font-family:'Liberation Sans';letter-spacing:0px;transform:scaleX(1.1361);transform-origin:0 0;">19/08/2025</div>
<div class="ab" style="left:1912px;top:1046px;width:1px;height:20px;background:#888"></div>
</body></html>
